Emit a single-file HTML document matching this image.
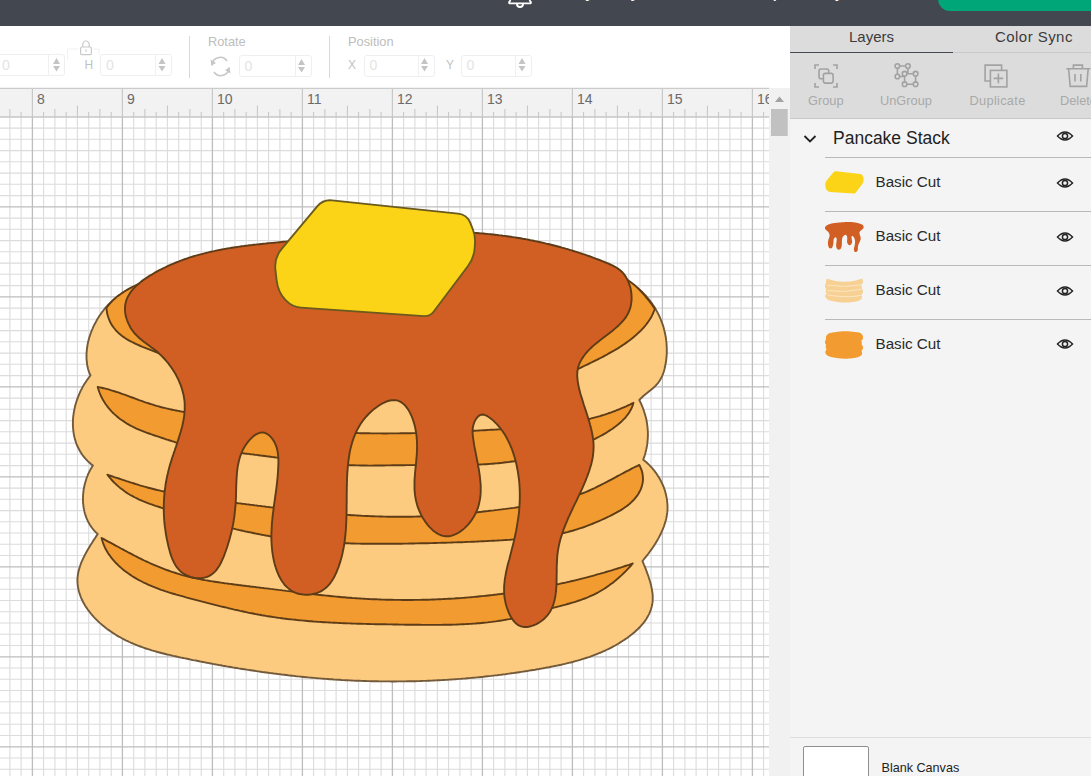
<!DOCTYPE html>
<html><head><meta charset="utf-8">
<style>
html,body{margin:0;padding:0;}
body{width:1091px;height:776px;overflow:hidden;position:relative;background:#fff;font-family:"Liberation Sans",sans-serif;}
.abs{position:absolute;}
#topbar{left:0;top:0;width:1091px;height:26px;background:#424750;overflow:hidden;}
#topbar .t{position:absolute;top:-20px;font-size:20px;color:#fff;white-space:nowrap;line-height:20px;}
#green{position:absolute;left:938px;top:-20px;width:200px;height:31px;border-radius:12px;background:#00a677;}
#toolbar{left:0;top:26px;width:790px;height:62px;background:#fff;}
.lbl{position:absolute;font-size:12.8px;color:#bdbdbd;line-height:14px;white-space:nowrap;}
.inp{position:absolute;height:20px;border:1px solid #efefef;border-radius:3px;background:transparent;}
.inp .z{position:absolute;left:5px;top:1.5px;font-size:14px;color:#e4e4e4;}
.inp .sp{position:absolute;top:0;right:0;width:15px;height:20px;border-left:1px solid #f0f0f0;}
.sep{position:absolute;top:36px;width:1px;height:42px;background:#d9d9d9;}
#panel{left:790px;top:26px;width:301px;height:750px;background:#f4f4f4;}
#tabs{left:0;top:0;width:301px;height:27px;background:#dcdcdc;}
.tab{position:absolute;font-size:15px;color:#3b3b3b;line-height:17px;white-space:nowrap;}
#ptool{left:0;top:27px;width:301px;height:65px;background:#dcdcdc;border-bottom:1.5px solid #c8c8c8;}
.plbl{position:absolute;font-size:12.8px;color:#a9a9a9;line-height:14px;white-space:nowrap;}
.bc{position:absolute;left:85.5px;font-size:15.2px;color:#2a2a2a;line-height:17px;white-space:nowrap;}
.rowsep{position:absolute;left:35px;width:266px;height:1px;background:#b9b9b9;}
.eye{position:absolute;left:266px;width:17px;height:12px;}
</style></head><body>

<div id="topbar" class="abs">
  <svg class="abs" style="left:0;top:0" width="1091" height="26">
    <path d="M511 -8 Q511 1 509.2 2 Q508.6 3.4 510.5 3.4 H529.5 Q531.4 3.4 530.8 2 Q529 1 529 -8" fill="none" stroke="#fff" stroke-width="1.9"/>
    <path d="M517 4 A3 3 0 0 0 523 4" fill="none" stroke="#fff" stroke-width="1.9"/>
  </svg>
  <div class="t" style="left:568.5px;">My Projects</div>
  <div class="t" style="left:731.5px;">Sample Projects,</div>
  <div id="green"></div>
</div>

<div id="toolbar" class="abs">
  <!-- W input (clipped) -->
  <div class="inp" style="left:-10px;top:28px;width:73px;"><span class="z" style="left:11px">0</span><div class="sp"></div></div>
  <svg class="abs" style="left:0;top:0" width="790" height="62">
    <g fill="#c4c4c4">
      <path d="M53 38 L60 38 L56.5 32 Z"/><path d="M53 40 L60 40 L56.5 45.5 Z"/>
      <path d="M158.5 38 L165.5 38 L162 32 Z"/><path d="M158.5 40 L165.5 40 L162 45.5 Z"/>
      <path d="M298 39 L305 39 L301.5 33 Z"/><path d="M298 41 L305 41 L301.5 46.5 Z"/>
      <path d="M421 38 L428 38 L424.5 32 Z"/><path d="M421 40 L428 40 L424.5 45.5 Z"/>
      <path d="M518.5 38 L525.5 38 L522 32 Z"/><path d="M518.5 40 L525.5 40 L522 45.5 Z"/>
    </g>
    <!-- lock -->
    <g fill="none" stroke="#c9c9c9" stroke-width="1.2">
      <rect x="80.6" y="21" width="10.8" height="7.6" rx="1.2"/>
      <path d="M82.8 21 V17.5 Q86 12 89.2 17.5 V21"/>
    </g>
    <rect x="85.4" y="23.5" width="1.2" height="2.4" fill="#c9c9c9"/>
    <path d="M67.5 34 V23 H79 M93 23 H99 V29" fill="none" stroke="#f1f1f1" stroke-width="1"/>
    <!-- rotate icon -->
    <g fill="none" stroke="#c6c6c6" stroke-width="1.6">
      <path d="M212 39.5 A8.2 8.2 0 0 1 227 35"/>
      <path d="M229 41.5 A8.2 8.2 0 0 1 214 46"/>
    </g>
    <g fill="#c6c6c6">
      <path d="M210.5 33.5 L211.5 39.5 L216 37 Z"/>
      <path d="M230.5 47.5 L229.5 41.5 L225 44 Z"/>
    </g>
  </svg>
  <div class="lbl" style="left:84.5px;top:32px;font-size:12px;color:#c2c2c2">H</div>
  <div class="inp" style="left:100px;top:28px;width:70px;"><span class="z">0</span><div class="sp"></div></div>
  <div class="sep" style="left:188.5px;top:10px;"></div>
  <div class="lbl" style="left:208px;top:9px;">Rotate</div>
  <div class="inp" style="left:238.5px;top:29px;width:71px;"><span class="z">0</span><div class="sp"></div></div>
  <div class="sep" style="left:328.5px;top:10px;"></div>
  <div class="lbl" style="left:348px;top:9px;">Position</div>
  <div class="lbl" style="left:348px;top:31.5px;font-size:12px;color:#c2c2c2">X</div>
  <div class="inp" style="left:363.5px;top:28.5px;width:69px;"><span class="z">0</span><div class="sp"></div></div>
  <div class="lbl" style="left:446px;top:31.5px;font-size:12px;color:#c2c2c2">Y</div>
  <div class="inp" style="left:460.5px;top:28.5px;width:69px;"><span class="z">0</span><div class="sp"></div></div>
</div>

<!-- canvas: ruler + grid -->
<svg class="abs" style="left:0;top:0" width="790" height="776">
  <rect x="0" y="88" width="769" height="29" fill="#f2f2f2"/>
  <rect x="0" y="117" width="769" height="659" fill="#fff"/>
  <path d="M9.9 117 V776 M21.1 117 V776 M43.6 117 V776 M54.9 117 V776 M66.2 117 V776 M77.4 117 V776 M88.7 117 V776 M99.9 117 V776 M111.2 117 V776 M133.7 117 V776 M144.9 117 V776 M156.2 117 V776 M167.4 117 V776 M178.7 117 V776 M189.9 117 V776 M201.2 117 V776 M223.7 117 V776 M234.9 117 V776 M246.2 117 V776 M257.4 117 V776 M268.6 117 V776 M279.9 117 V776 M291.1 117 V776 M313.6 117 V776 M324.9 117 V776 M336.1 117 V776 M347.4 117 V776 M358.6 117 V776 M369.9 117 V776 M381.1 117 V776 M403.6 117 V776 M414.9 117 V776 M426.1 117 V776 M437.4 117 V776 M448.6 117 V776 M459.9 117 V776 M471.1 117 V776 M493.6 117 V776 M504.9 117 V776 M516.1 117 V776 M527.4 117 V776 M538.6 117 V776 M549.9 117 V776 M561.1 117 V776 M583.6 117 V776 M594.9 117 V776 M606.1 117 V776 M617.4 117 V776 M628.6 117 V776 M639.9 117 V776 M651.1 117 V776 M673.6 117 V776 M684.9 117 V776 M696.1 117 V776 M707.4 117 V776 M718.6 117 V776 M729.9 117 V776 M741.1 117 V776 M763.6 117 V776 M0 128.1 H769 M0 139.3 H769 M0 150.6 H769 M0 161.8 H769 M0 173.1 H769 M0 184.3 H769 M0 195.6 H769 M0 218.1 H769 M0 229.3 H769 M0 240.6 H769 M0 251.8 H769 M0 263.1 H769 M0 274.3 H769 M0 285.6 H769 M0 308.1 H769 M0 319.3 H769 M0 330.6 H769 M0 341.8 H769 M0 353.1 H769 M0 364.3 H769 M0 375.6 H769 M0 398.1 H769 M0 409.3 H769 M0 420.6 H769 M0 431.8 H769 M0 443.1 H769 M0 454.3 H769 M0 465.6 H769 M0 488.1 H769 M0 499.3 H769 M0 510.6 H769 M0 521.8 H769 M0 533 H769 M0 544.3 H769 M0 555.5 H769 M0 578 H769 M0 589.3 H769 M0 600.5 H769 M0 611.8 H769 M0 623 H769 M0 634.3 H769 M0 645.5 H769 M0 668 H769 M0 679.3 H769 M0 690.5 H769 M0 701.8 H769 M0 713 H769 M0 724.3 H769 M0 735.5 H769 M0 758 H769 M0 769.3 H769" stroke="#dcdcdc" stroke-width="1.1" fill="none"/>
  <path d="M32.4 117 V776 M122.4 117 V776 M212.4 117 V776 M302.4 117 V776 M392.4 117 V776 M482.4 117 V776 M572.4 117 V776 M662.4 117 V776 M752.4 117 V776 M0 206.8 H769 M0 296.8 H769 M0 386.8 H769 M0 476.8 H769 M0 566.8 H769 M0 656.8 H769 M0 746.8 H769" stroke="#bdbdbd" stroke-width="1.3" fill="none"/>
  <path d="M9.9 109 V117 M21.1 112 V117 M43.6 112 V117 M54.9 109 V117 M66.2 112 V117 M77.4 105.5 V117 M88.7 112 V117 M99.9 109 V117 M111.2 112 V117 M133.7 112 V117 M144.9 109 V117 M156.2 112 V117 M167.4 105.5 V117 M178.7 112 V117 M189.9 109 V117 M201.2 112 V117 M223.7 112 V117 M234.9 109 V117 M246.2 112 V117 M257.4 105.5 V117 M268.6 112 V117 M279.9 109 V117 M291.1 112 V117 M313.6 112 V117 M324.9 109 V117 M336.1 112 V117 M347.4 105.5 V117 M358.6 112 V117 M369.9 109 V117 M381.1 112 V117 M403.6 112 V117 M414.9 109 V117 M426.1 112 V117 M437.4 105.5 V117 M448.6 112 V117 M459.9 109 V117 M471.1 112 V117 M493.6 112 V117 M504.9 109 V117 M516.1 112 V117 M527.4 105.5 V117 M538.6 112 V117 M549.9 109 V117 M561.1 112 V117 M583.6 112 V117 M594.9 109 V117 M606.1 112 V117 M617.4 105.5 V117 M628.6 112 V117 M639.9 109 V117 M651.1 112 V117 M673.6 112 V117 M684.9 109 V117 M696.1 112 V117 M707.4 105.5 V117 M718.6 112 V117 M729.9 109 V117 M741.1 112 V117 M763.6 112 V117" stroke="#c4c4c4" stroke-width="1" fill="none"/>
  <path d="M32.4 88 V117 M122.4 88 V117 M212.4 88 V117 M302.4 88 V117 M392.4 88 V117 M482.4 88 V117 M572.4 88 V117 M662.4 88 V117 M752.4 88 V117" stroke="#c8c8c8" stroke-width="1.2" fill="none"/>
  <path d="M0 88.3 H769" stroke="#cbcbcb" stroke-width="1.3"/>
  <path d="M0 117 H769" stroke="#c6c6c6" stroke-width="1.6"/>
  <g font-family="Liberation Sans" font-size="14" fill="#6a6a6a"><text x="37" y="103.5">8</text><text x="127" y="103.5">9</text><text x="217" y="103.5">10</text><text x="307" y="103.5">11</text><text x="397" y="103.5">12</text><text x="487" y="103.5">13</text><text x="577" y="103.5">14</text><text x="667" y="103.5">15</text><text x="757" y="103.5">16</text></g>
  <!-- scrollbar -->
  <rect x="769" y="88" width="21" height="688" fill="#f1f1f1"/>
  <path d="M775 102 L784 102 L779.5 96.5 Z" fill="#a3a3a3"/>
  <rect x="771" y="109" width="16.7" height="27" fill="#c1c1c1"/>

  <!-- pancake -->
  <g stroke="#5e3c17" stroke-width="1.9" stroke-linejoin="round">
    <path d="M90.5 375.5L89.7 373.7L89 371.9L88.4 370.1L87.9 368.2L87.5 366.3L87.1 364.4L86.9 362.4L86.7 360.5L86.5 358.5L86.5 356.5L86.5 354.5L86.6 352.5L86.8 350.5L87 348.5L87.3 346.5L87.6 344.5L88 342.5L88.5 340.5L89 338.5L89.6 336.5L90.3 334.5L91 332.5L91.7 330.6L92.6 328.6L93.4 326.7L94.3 324.8L95.3 323L96.3 321.1L97.3 319.3L98.4 317.6L99.5 315.8L100.7 314.1L101.8 312.4L103.1 310.8L104.3 309.2L105.6 307.7L107 306.2L108.3 304.7L109.7 303.3L111.1 301.9L112.6 300.6L114 299.4L115.5 298.1L117 296.9L118.6 295.8L120.2 294.7L121.8 293.6L123.4 292.6L125 291.6L126.7 290.7L128.4 289.7L130.1 288.9L131.8 288L133.5 287.2L135.3 286.4L137.1 285.6L138.9 284.9L140.7 284.2L142.5 283.5L144.4 282.9L146.2 282.3L148.1 281.7L150 281.1L151.9 280.5L153.8 280L155.8 279.5L157.7 279L159.7 278.5L161.6 278.1L163.6 277.7L165.6 277.2L167.6 276.8L169.6 276.4L171.6 276.1L173.6 275.7L175.6 275.4L177.6 275L179.7 274.7L181.7 274.4L183.7 274L185.8 273.7L187.8 273.4L189.9 273.1L191.9 272.8L193.9 272.5L196 272.2L198 271.9L200.1 271.7L202.1 271.4L204.2 271.1L206.2 270.8L208.2 270.5L210.3 270.2L212.3 269.9L214.3 269.6L216.4 269.3L218.4 269L220.4 268.7L222.5 268.4L224.5 268.1L226.5 267.8L228.5 267.5L230.5 267.2L232.6 266.9L234.6 266.6L236.6 266.3L238.6 266L240.6 265.7L242.6 265.4L244.6 265.1L246.6 264.9L248.6 264.6L250.7 264.3L252.7 264L254.7 263.7L256.7 263.4L258.7 263.1L260.7 262.8L262.7 262.6L264.6 262.3L266.6 262L268.6 261.7L270.6 261.4L272.6 261.2L274.6 260.9L276.6 260.6L278.6 260.4L280.6 260.1L282.6 259.8L284.5 259.6L286.5 259.3L288.5 259.1L290.5 258.8L292.5 258.6L294.5 258.3L296.4 258.1L298.4 257.9L300.4 257.6L302.4 257.4L304.4 257.2L306.3 257L308.3 256.7L310.3 256.5L312.3 256.3L314.2 256.1L316.2 255.9L318.2 255.7L320.2 255.5L322.1 255.3L324.1 255.1L326.1 254.9L328 254.8L330 254.6L332 254.4L333.9 254.3L335.9 254.1L337.9 253.9L339.9 253.8L341.8 253.6L343.8 253.5L345.8 253.4L347.7 253.3L349.7 253.1L351.7 253L353.6 252.9L355.6 252.8L357.6 252.7L359.5 252.6L361.5 252.5L363.5 252.4L365.4 252.4L367.4 252.3L369.4 252.2L371.3 252.2L373.3 252.1L375.3 252.1L377.2 252.1L379.2 252L381.2 252L383.1 252L385.1 252L387.1 252L389 252L391 252L393 252L394.9 252.1L396.9 252.1L398.9 252.1L400.9 252.2L402.8 252.2L404.8 252.3L406.8 252.4L408.7 252.4L410.7 252.5L412.7 252.6L414.7 252.7L416.6 252.8L418.6 252.8L420.6 252.9L422.6 253.1L424.5 253.2L426.5 253.3L428.5 253.4L430.5 253.5L432.4 253.6L434.4 253.8L436.4 253.9L438.4 254.1L440.4 254.2L442.3 254.3L444.3 254.5L446.3 254.7L448.3 254.8L450.3 255L452.3 255.1L454.2 255.3L456.2 255.5L458.2 255.7L460.2 255.8L462.2 256L464.2 256.2L466.2 256.4L468.1 256.6L470.1 256.8L472.1 257L474.1 257.2L476.1 257.4L478.1 257.6L480.1 257.8L482.1 258L484.1 258.2L486.1 258.4L488.1 258.6L490.1 258.8L492.1 259L494.1 259.2L496.1 259.4L498.1 259.6L500.1 259.9L502.1 260.1L504.1 260.3L506.1 260.5L508.1 260.7L510.1 260.9L512.2 261.2L514.2 261.4L516.2 261.6L518.2 261.8L520.2 262L522.2 262.3L524.2 262.5L526.3 262.7L528.3 262.9L530.3 263.1L532.3 263.3L534.4 263.6L536.4 263.8L538.4 264L540.4 264.2L542.5 264.4L544.5 264.6L546.5 264.8L548.6 265L550.6 265.2L552.6 265.4L554.7 265.6L556.7 265.8L558.7 266L560.8 266.2L562.8 266.4L564.9 266.6L566.9 266.8L569 267L571 267.2L573 267.4L575.1 267.6L577.1 267.8L579.1 268L581.2 268.3L583.2 268.5L585.2 268.8L587.2 269.1L589.2 269.4L591.2 269.7L593.2 270L595.2 270.4L597.1 270.7L599.1 271.1L601 271.6L603 272L604.9 272.5L606.8 273L608.7 273.6L610.6 274.1L612.4 274.7L614.3 275.4L616.1 276.1L618 276.8L619.8 277.5L621.6 278.3L623.3 279.2L625.1 280.1L626.8 281L628.5 282L630.2 283L631.9 284L633.5 285.1L635.1 286.3L636.7 287.5L638.3 288.7L639.8 290L641.3 291.3L642.8 292.7L644.2 294.1L645.5 295.5L646.9 297L648.2 298.5L649.5 300.1L650.7 301.7L651.9 303.3L653 305L654.1 306.6L655.2 308.4L656.2 310.1L657.2 311.9L658.1 313.7L659 315.5L659.9 317.3L660.6 319.2L661.4 321.1L662.1 323L662.8 324.9L663.4 326.8L663.9 328.8L664.4 330.7L664.9 332.7L665.3 334.7L665.7 336.7L666 338.7L666.2 340.7L666.5 342.7L666.6 344.7L666.7 346.7L666.8 348.7L666.8 350.8L666.8 352.8L666.7 354.8L666.5 356.8L666.3 358.8L666.1 360.8L665.8 362.8L665.4 364.8L665 366.7L664.6 368.7L664.1 370.6L663.5 372.5L662.8 374.3L662.1 376.1L661.2 377.9L660.3 379.6L659.3 381.2L658.2 382.8L657 384.2L655.7 385.6L654.3 387L652.9 388.3L651.4 389.5L649.8 390.8L648.3 392L646.7 393.3L645.2 394.5L643.6 395.8L642.1 397.2L640.7 398.5L639.3 400L640.2 401.9L641.1 403.7L641.9 405.6L642.7 407.5L643.4 409.5L644.1 411.4L644.7 413.4L645.3 415.4L645.8 417.3L646.3 419.3L646.7 421.3L647 423.4L647.3 425.4L647.5 427.4L647.7 429.4L647.8 431.5L647.9 433.5L647.9 435.6L647.8 437.6L647.7 439.6L647.5 441.7L647.3 443.7L647 445.7L646.6 447.7L646.2 449.8L645.7 451.8L645.2 453.8L644.6 455.8L643.9 457.7L643.2 459.7L644.8 461L646.4 462.3L647.9 463.7L649.4 465.2L650.8 466.7L652.2 468.2L653.6 469.8L654.8 471.4L656.1 473.1L657.2 474.8L658.3 476.5L659.4 478.2L660.4 480L661.3 481.8L662.2 483.7L663 485.5L663.8 487.4L664.5 489.3L665.1 491.2L665.6 493.2L666.1 495.1L666.5 497.1L666.9 499.1L667.1 501L667.3 503L667.5 505L667.5 507L667.5 509L667.4 510.9L667.2 512.9L666.9 514.9L666.6 516.8L666.2 518.8L665.7 520.7L665.1 522.6L664.5 524.6L663.9 526.5L663.1 528.4L662.4 530.2L661.5 532.1L660.7 534L659.7 535.8L658.8 537.6L657.8 539.4L656.7 541.2L655.7 543L654.6 544.7L653.4 546.5L652.3 548.2L651.1 549.9L649.9 551.5L648.7 553.2L647.5 554.8L646.2 556.4L645 557.9L643.7 559.5L642.5 561L643.2 562.6L643.8 564.3L644.5 566L645.3 567.8L646 569.7L646.7 571.6L647.4 573.6L648.2 575.6L648.8 577.6L649.5 579.7L650.1 581.7L650.7 583.8L651.2 585.9L651.6 588L652 590.2L652.3 592.2L652.6 594.3L652.7 596.4L652.7 598.4L652.7 600.4L652.5 602.4L652.2 604.3L651.8 606.2L651.3 608L650.8 609.8L650.1 611.6L649.4 613.4L648.5 615.1L647.6 616.7L646.6 618.4L645.6 620L644.5 621.6L643.3 623.1L642 624.6L640.7 626.1L639.4 627.5L638 629L636.5 630.3L635 631.7L633.5 633L631.9 634.3L630.3 635.5L628.7 636.8L627.1 638L625.4 639.1L623.7 640.2L622 641.3L620.3 642.4L618.6 643.5L616.9 644.5L615.2 645.5L613.4 646.4L611.7 647.4L609.9 648.3L608.1 649.2L606.3 650L604.5 650.9L602.7 651.7L600.9 652.5L599 653.2L597.2 654L595.3 654.7L593.5 655.4L591.6 656.1L589.7 656.8L587.9 657.4L586 658L584.1 658.6L582.2 659.2L580.3 659.8L578.3 660.4L576.4 660.9L574.5 661.4L572.6 662L570.6 662.5L568.7 662.9L566.7 663.4L564.8 663.9L562.8 664.3L560.9 664.8L558.9 665.2L556.9 665.6L554.9 666L553 666.4L551 666.8L549 667.2L547 667.5L545.1 667.9L543.1 668.3L541.1 668.6L539.1 669L537.1 669.3L535.1 669.7L533.2 670L531.2 670.3L529.2 670.6L527.2 671L525.2 671.3L523.2 671.6L521.2 671.9L519.3 672.2L517.3 672.5L515.3 672.8L513.3 673.1L511.3 673.3L509.3 673.6L507.3 673.9L505.3 674.2L503.3 674.4L501.3 674.7L499.3 674.9L497.4 675.2L495.4 675.4L493.4 675.6L491.4 675.9L489.4 676.1L487.4 676.3L485.4 676.5L483.4 676.8L481.4 677L479.4 677.2L477.4 677.4L475.4 677.6L473.4 677.7L471.4 677.9L469.4 678.1L467.4 678.3L465.4 678.5L463.4 678.6L461.4 678.8L459.4 678.9L457.4 679.1L455.4 679.2L453.4 679.4L451.4 679.5L449.4 679.6L447.4 679.8L445.4 679.9L443.4 680L441.4 680.1L439.5 680.2L437.5 680.3L435.5 680.4L433.5 680.5L431.5 680.6L429.5 680.7L427.5 680.8L425.5 680.9L423.5 680.9L421.5 681L419.5 681.1L417.5 681.1L415.5 681.2L413.5 681.2L411.5 681.3L409.5 681.3L407.5 681.3L405.5 681.4L403.5 681.4L401.5 681.4L399.5 681.4L397.5 681.4L395.5 681.5L393.5 681.5L391.5 681.5L389.5 681.4L387.5 681.4L385.5 681.4L383.5 681.4L381.5 681.4L379.5 681.4L377.5 681.3L375.5 681.3L373.5 681.2L371.5 681.2L369.5 681.1L367.5 681.1L365.5 681L363.5 681L361.6 680.9L359.6 680.8L357.6 680.7L355.6 680.7L353.6 680.6L351.6 680.5L349.6 680.4L347.6 680.3L345.6 680.2L343.6 680.1L341.6 680L339.6 679.8L337.7 679.7L335.7 679.6L333.7 679.5L331.7 679.3L329.7 679.2L327.7 679L325.7 678.9L323.7 678.7L321.8 678.6L319.8 678.4L317.8 678.3L315.8 678.1L313.8 677.9L311.8 677.7L309.9 677.6L307.9 677.4L305.9 677.2L303.9 677L301.9 676.8L300 676.6L298 676.4L296 676.2L294 675.9L292 675.7L290 675.5L288.1 675.3L286.1 675L284.1 674.8L282.1 674.6L280.1 674.3L278.2 674.1L276.2 673.8L274.2 673.6L272.2 673.3L270.3 673.1L268.3 672.8L266.3 672.5L264.3 672.2L262.3 672L260.4 671.7L258.4 671.4L256.4 671.1L254.4 670.8L252.5 670.5L250.5 670.2L248.5 669.9L246.5 669.6L244.5 669.3L242.6 669L240.6 668.7L238.6 668.4L236.6 668L234.6 667.7L232.7 667.4L230.7 667L228.7 666.7L226.7 666.4L224.7 666L222.8 665.7L220.8 665.3L218.8 665L216.8 664.6L214.8 664.2L212.9 663.9L210.9 663.5L208.9 663.1L206.9 662.8L204.9 662.4L203 662L201 661.6L199 661.2L197 660.8L195 660.4L193 660.1L191.1 659.7L189.1 659.2L187.1 658.8L185.1 658.4L183.1 658L181.1 657.6L179.2 657.2L177.2 656.7L175.2 656.3L173.2 655.9L171.2 655.4L169.3 654.9L167.3 654.5L165.3 654L163.4 653.5L161.4 653L159.5 652.5L157.5 652L155.6 651.4L153.7 650.8L151.7 650.3L149.8 649.7L147.9 649.1L146 648.5L144.1 647.8L142.2 647.2L140.4 646.5L138.5 645.8L136.7 645.1L134.8 644.3L133 643.5L131.2 642.8L129.4 642L127.6 641.1L125.8 640.3L124 639.4L122.3 638.5L120.6 637.5L118.8 636.6L117.1 635.6L115.4 634.5L113.8 633.5L112.1 632.4L110.5 631.3L108.8 630.1L107.2 629L105.6 627.8L104.1 626.5L102.5 625.2L101 623.9L99.5 622.6L98 621.2L96.6 619.8L95.1 618.3L93.7 616.8L92.4 615.3L91.1 613.8L89.8 612.2L88.6 610.6L87.4 609L86.3 607.4L85.2 605.7L84.2 604L83.2 602.3L82.4 600.5L81.5 598.8L80.8 597L80.1 595.2L79.5 593.3L78.9 591.5L78.5 589.6L78.1 587.7L77.8 585.8L77.6 583.9L77.5 582L77.4 580.1L77.5 578.1L77.7 576.1L78 574.2L78.3 572.2L78.8 570.2L79.4 568.2L80 566.2L80.7 564.2L81.5 562.2L82.4 560.2L83.3 558.2L84.2 556.3L85.2 554.4L86.2 552.4L87.3 550.6L88.3 548.7L89.4 546.9L90.5 545.1L91.6 543.4L92.7 541.7L93.7 540.1L94.8 538.5L95.8 536.9L96.8 535.4L97.7 534L96.2 532.6L94.7 531.1L93.4 529.6L92.1 528L91 526.4L89.9 524.7L88.9 523L87.9 521.2L87.1 519.4L86.3 517.6L85.6 515.7L85 513.8L84.5 511.9L84.1 509.9L83.7 508L83.4 506L83.2 504L83 502L83 499.9L83 497.9L83 495.9L83.2 493.9L83.4 491.8L83.6 489.8L84 487.8L84.4 485.8L84.9 483.8L85.4 481.9L86 479.9L86.6 478L87.4 476.1L88.1 474.2L89 472.4L89.9 470.6L90.8 468.9L91.8 467.2L92.9 465.5L91.2 464.2L89.6 462.8L88 461.4L86.6 459.9L85.2 458.4L83.9 456.8L82.7 455.3L81.5 453.6L80.5 452L79.5 450.3L78.6 448.5L77.7 446.8L76.9 445L76.2 443.1L75.6 441.3L75 439.4L74.5 437.5L74.1 435.6L73.7 433.7L73.5 431.8L73.2 429.8L73.1 427.8L72.9 425.9L72.9 423.9L72.9 421.9L73 419.9L73.1 417.9L73.3 415.9L73.6 413.9L73.9 411.9L74.3 409.9L74.7 407.9L75.1 405.9L75.7 404L76.3 402L76.9 400.1L77.6 398.2L78.3 396.3L79.1 394.4L79.9 392.5L80.8 390.7L81.7 388.9L82.6 387.1L83.6 385.3L84.7 383.6L85.8 381.9L86.9 380.2L88.1 378.6L89.3 377L90.5 375.5Z" fill="#fccb7f" stroke="#735a3a" stroke-width="1.9"/>
    <path d="M165 272L163.2 272.9L161.4 273.8L159.6 274.7L157.8 275.5L155.9 276.4L154.1 277.2L152.2 278L150.3 278.9L148.4 279.7L146.5 280.5L144.6 281.3L142.7 282.2L140.8 283L139 283.9L137.1 284.7L135.2 285.6L133.4 286.5L131.5 287.4L129.7 288.4L127.9 289.4L126.2 290.4L124.4 291.5L122.7 292.6L121 293.7L119.4 294.9L117.7 296.1L116.2 297.4L114.6 298.7L113.1 300.1L111.7 301.6L110.3 303.1L108.9 304.6L107.6 306.3L106.4 308L106.7 310.3L107 312.6L107.5 314.7L108.1 316.8L108.8 318.8L109.6 320.7L110.4 322.5L111.4 324.2L112.4 325.9L113.6 327.5L114.8 329L116 330.5L117.4 331.9L118.8 333.2L120.3 334.5L121.8 335.7L123.4 336.9L125 338L126.7 339.1L128.4 340.1L130.2 341.1L132 342L133.8 342.9L135.7 343.8L137.5 344.7L139.4 345.5L141.3 346.3L143.2 347.1L145.2 347.8L147.1 348.6L149 349.3L151 350.1L152.9 350.8L154.8 351.6L156.7 352.3L158.6 353.1L160.4 354L162.3 354.8L164.1 355.7L165.9 356.7L167.6 357.6L169.3 358.7L171 359.8L172.6 361L174.2 362.2L175.7 363.5L177.2 364.9L178.6 366.4L180 368L181.9 365.6L183.6 363.3L185.3 361L187 358.7L188.5 356.5L190 354.2L191.4 352L192.7 349.9L194 347.7L195.2 345.6L196.3 343.4L197.3 341.4L198.2 339.3L199.1 337.2L199.9 335.2L200.6 333.2L201.3 331.3L201.8 329.3L202.3 327.4L202.8 325.5L203.1 323.6L203.4 321.8L203.6 319.9L203.7 318.1L203.7 316.4L203.7 314.6L203.6 312.9L203.4 311.2L203.1 309.5L202.8 307.8L202.4 306.2L201.9 304.6L201.3 303L200.7 301.4L199.9 299.9L199.1 298.4L198.3 296.9L197.3 295.4L196.3 293.9L195.2 292.5L194 291.1L192.8 289.8L191.5 288.4L190.1 287.1L188.6 285.8L187.1 284.5L185.4 283.2L183.7 282L181.9 280.8L180.1 279.6L178.2 278.5L176.2 277.3L174.1 276.2L171.9 275.1L169.7 274.1L167.4 273L165 272Z" fill="#f29b30"/>
    <path d="M598 274L600.3 273.6L602.6 273.4L604.8 273.3L606.9 273.3L609.1 273.5L611.2 273.7L613.2 274.1L615.2 274.5L617.2 275.1L619.1 275.8L621 276.5L622.8 277.3L624.6 278.3L626.4 279.2L628.1 280.3L629.8 281.5L631.5 282.7L633.1 283.9L634.7 285.2L636.2 286.6L637.8 288L639.2 289.5L640.7 291L642.1 292.5L643.5 294.1L644.9 295.6L646.2 297.3L647.5 298.9L648.8 300.5L650.1 302.1L651.3 303.8L652.5 305.4L653.7 307.1L654.8 308.7L654.2 310.6L653.4 312.5L652.6 314.4L651.7 316.2L650.7 317.9L649.7 319.6L648.6 321.3L647.4 322.9L646.2 324.5L644.9 326.1L643.6 327.6L642.2 329.1L640.8 330.6L639.3 332L637.8 333.4L636.3 334.8L634.8 336.1L633.2 337.4L631.6 338.7L630 340L628.3 341.2L626.7 342.4L625 343.6L623.3 344.7L621.6 345.9L619.9 347L618.2 348.1L616.5 349.2L614.7 350.2L613 351.2L611.2 352.2L609.4 353.2L607.6 354.2L605.9 355.2L604.1 356.1L602.3 357.1L600.5 358L598.7 358.9L596.9 359.8L595.1 360.7L593.2 361.6L591.4 362.5L589.6 363.4L587.8 364.3L585.9 365.2L584.1 366L582.3 366.9L580.5 367.8L578.6 368.7L576.8 369.6L575 370.5L573.4 368.1L571.8 365.6L570.3 363.2L568.8 360.9L567.5 358.5L566.2 356.2L565 353.9L563.8 351.7L562.7 349.5L561.7 347.3L560.8 345.1L559.9 343L559.1 340.8L558.4 338.8L557.7 336.7L557.1 334.7L556.6 332.7L556.1 330.7L555.8 328.8L555.4 326.8L555.2 325L555 323.1L554.9 321.3L554.9 319.5L554.9 317.7L555 315.9L555.2 314.2L555.5 312.5L555.8 310.9L556.2 309.2L556.6 307.6L557.2 306L557.8 304.5L558.4 303L559.2 301.5L560 300L560.9 298.6L561.8 297.2L562.9 295.8L563.9 294.4L565.1 293.1L566.3 291.8L567.6 290.5L569 289.3L570.5 288.1L572 286.9L573.5 285.7L575.2 284.6L576.9 283.5L578.7 282.4L580.6 281.4L582.5 280.3L584.5 279.4L586.6 278.4L588.7 277.5L590.9 276.5L593.2 275.7L595.6 274.8L598 274Z" fill="#f29b30"/>
    <path d="M97.7 387L99.7 387.4L101.6 387.8L103.6 388.2L105.5 388.7L107.5 389.2L109.4 389.7L111.3 390.3L113.2 390.8L115.2 391.5L117.1 392.1L119 392.7L120.8 393.4L122.7 394.1L124.6 394.7L126.5 395.4L128.4 396.1L130.3 396.8L132.1 397.5L134 398.2L135.9 398.9L137.8 399.6L139.7 400.3L141.6 400.9L143.4 401.6L145.3 402.3L147.2 402.9L149.1 403.5L151 404.1L152.9 404.7L154.8 405.3L156.7 405.9L158.7 406.4L160.6 407L162.5 407.5L164.5 407.9L166.4 408.4L168.4 408.8L170.3 409.3L172.3 409.7L174.2 410.1L176.2 410.5L178.1 410.9L180.1 411.3L182.1 411.6L184 412L186 412.4L188 412.8L189.9 413.1L191.9 413.5L193.9 413.9L195.8 414.2L197.8 414.6L199.8 415L201.7 415.3L203.7 415.7L205.7 416.1L207.6 416.4L209.6 416.8L211.6 417.1L213.6 417.5L215.5 417.8L217.5 418.2L219.5 418.5L221.4 418.8L223.4 419.2L225.4 419.5L227.4 419.9L229.3 420.2L231.3 420.5L233.3 420.8L235.3 421.2L237.3 421.5L239.2 421.8L241.2 422.1L243.2 422.4L245.2 422.7L247.1 423L249.1 423.3L251.1 423.6L253.1 423.9L255.1 424.2L257.1 424.4L259 424.7L261 425L263 425.3L265 425.5L267 425.8L269 426.1L271 426.3L273 426.6L275 426.8L276.9 427L278.9 427.3L280.9 427.5L282.9 427.7L284.9 428L286.9 428.2L288.9 428.4L290.9 428.6L292.9 428.8L294.9 429L296.9 429.2L298.9 429.4L300.9 429.6L302.9 429.8L304.9 429.9L306.9 430.1L308.9 430.3L310.9 430.5L312.9 430.6L314.9 430.8L316.9 430.9L318.9 431.1L320.9 431.2L322.9 431.4L324.9 431.5L326.9 431.6L328.9 431.8L330.9 431.9L332.9 432L334.9 432.1L336.9 432.2L338.9 432.3L340.9 432.4L342.9 432.5L344.9 432.6L346.9 432.7L348.9 432.8L350.9 432.8L352.9 432.9L354.9 433L356.9 433L358.9 433.1L360.9 433.2L362.9 433.2L364.9 433.2L366.9 433.3L368.9 433.3L370.9 433.4L372.9 433.4L374.9 433.4L376.9 433.4L378.9 433.4L380.9 433.4L382.9 433.5L384.9 433.5L386.9 433.5L388.9 433.4L390.9 433.4L392.9 433.4L394.9 433.4L396.9 433.4L398.9 433.4L400.9 433.3L402.9 433.3L404.9 433.3L406.9 433.2L408.9 433.2L410.9 433.2L412.9 433.1L414.9 433.1L416.9 433L418.9 433L420.8 432.9L422.8 432.9L424.8 432.8L426.8 432.7L428.8 432.7L430.8 432.6L432.8 432.5L434.8 432.5L436.8 432.4L438.8 432.3L440.8 432.2L442.8 432.2L444.8 432.1L446.8 432L448.8 431.9L450.8 431.8L452.8 431.7L454.8 431.6L456.9 431.5L458.9 431.5L460.9 431.4L462.9 431.3L464.9 431.2L466.9 431.1L468.9 431L470.9 430.9L472.9 430.8L474.9 430.7L476.9 430.6L478.9 430.5L480.9 430.4L482.9 430.3L484.9 430.2L486.9 430L488.9 429.9L490.9 429.8L492.9 429.7L495 429.6L497 429.5L499 429.4L501 429.3L503 429.2L505 429.1L507 429L509 428.9L511 428.7L513.1 428.6L515.1 428.5L517.1 428.4L519.1 428.3L521.1 428.1L523.1 428L525.1 427.9L527.1 427.7L529.1 427.6L531.1 427.4L533.1 427.3L535.1 427.1L537.1 426.9L539.1 426.8L541.1 426.6L543.1 426.4L545.1 426.2L547.1 426L549.1 425.8L551.1 425.5L553.1 425.3L555.1 425.1L557.1 424.8L559 424.5L561 424.3L563 424L565 423.7L566.9 423.4L568.9 423.1L570.9 422.7L572.8 422.4L574.8 422L576.8 421.7L578.7 421.3L580.7 420.9L582.6 420.5L584.5 420L586.5 419.6L588.4 419.1L590.3 418.7L592.3 418.2L594.2 417.7L596.1 417.2L598 416.6L599.9 416.1L601.8 415.5L603.8 414.9L605.6 414.3L607.5 413.7L609.4 413L611.3 412.4L613.2 411.7L615.1 411L616.9 410.2L618.8 409.5L620.6 408.7L622.5 407.9L624.3 407.1L626.2 406.3L628 405.4L629.9 404.6L631.7 403.7L633.5 402.8L632.9 404.8L632.2 406.7L631.4 408.5L630.5 410.3L629.5 412L628.4 413.6L627.2 415.2L626 416.8L624.7 418.3L623.3 419.7L621.9 421.1L620.4 422.5L618.9 423.8L617.4 425.1L615.8 426.3L614.1 427.5L612.5 428.7L610.8 429.8L609.1 430.9L607.4 432L605.7 433.1L603.9 434.1L602.2 435.1L600.4 436L598.6 437L596.8 437.9L595.1 438.8L593.2 439.6L591.4 440.5L589.6 441.3L587.8 442.1L585.9 442.8L584.1 443.6L582.2 444.3L580.4 445.1L578.5 445.8L576.6 446.4L574.7 447.1L572.8 447.7L570.9 448.4L569 449L567.1 449.6L565.2 450.2L563.3 450.7L561.4 451.3L559.4 451.8L557.5 452.4L555.6 452.9L553.6 453.4L551.7 453.9L549.7 454.4L547.8 454.9L545.8 455.3L543.9 455.8L541.9 456.2L540 456.7L538 457.1L536 457.5L534.1 457.9L532.1 458.3L530.1 458.7L528.2 459L526.2 459.4L524.2 459.7L522.2 460L520.2 460.4L518.3 460.7L516.3 461L514.3 461.3L512.3 461.5L510.3 461.8L508.3 462.1L506.3 462.3L504.3 462.5L502.3 462.8L500.3 463L498.3 463.2L496.3 463.4L494.3 463.5L492.3 463.7L490.3 463.9L488.3 464L486.3 464.2L484.3 464.3L482.3 464.4L480.3 464.5L478.3 464.6L476.3 464.7L474.3 464.8L472.3 464.9L470.3 464.9L468.3 465L466.3 465L464.3 465.1L462.3 465.1L460.3 465.1L458.4 465.1L456.4 465.2L454.4 465.2L452.4 465.2L450.4 465.2L448.4 465.2L446.4 465.2L444.4 465.2L442.4 465.2L440.4 465.1L438.4 465.1L436.4 465.1L434.4 465.1L432.4 465.1L430.3 465.1L428.3 465.1L426.3 465.1L424.3 465L422.3 465L420.3 465L418.3 465L416.3 465L414.3 465.1L412.3 465.1L410.3 465.1L408.3 465.1L406.3 465.1L404.3 465.2L402.3 465.2L400.3 465.2L398.3 465.2L396.3 465.3L394.3 465.3L392.2 465.3L390.2 465.4L388.2 465.4L386.2 465.4L384.2 465.5L382.2 465.5L380.2 465.5L378.2 465.5L376.2 465.5L374.2 465.5L372.2 465.6L370.2 465.6L368.2 465.6L366.2 465.5L364.2 465.5L362.2 465.5L360.2 465.5L358.1 465.4L356.1 465.4L354.1 465.3L352.1 465.3L350.1 465.2L348.1 465.1L346.1 465L344.2 464.9L342.2 464.8L340.2 464.7L338.2 464.6L336.2 464.4L334.2 464.3L332.2 464.1L330.2 464L328.2 463.8L326.2 463.6L324.2 463.4L322.2 463.3L320.2 463.1L318.3 462.9L316.3 462.6L314.3 462.4L312.3 462.2L310.3 462L308.3 461.7L306.3 461.5L304.3 461.3L302.3 461L300.4 460.8L298.4 460.5L296.4 460.3L294.4 460L292.4 459.8L290.4 459.5L288.4 459.2L286.5 459L284.5 458.7L282.5 458.4L280.5 458.2L278.5 457.9L276.5 457.6L274.5 457.3L272.5 457.1L270.5 456.8L268.6 456.5L266.6 456.3L264.6 456L262.6 455.7L260.6 455.5L258.6 455.2L256.6 454.9L254.6 454.7L252.6 454.4L250.6 454.2L248.6 453.9L246.6 453.7L244.6 453.5L242.6 453.2L240.6 453L238.6 452.8L236.6 452.6L234.6 452.3L232.6 452.1L230.6 451.9L228.6 451.7L226.6 451.5L224.6 451.2L222.6 451L220.6 450.8L218.7 450.5L216.7 450.3L214.7 450.1L212.7 449.8L210.7 449.5L208.7 449.3L206.7 449L204.8 448.7L202.8 448.4L200.8 448.1L198.8 447.7L196.9 447.4L194.9 447L193 446.6L191 446.2L189.1 445.8L187.1 445.4L185.2 444.9L183.3 444.4L181.3 443.9L179.4 443.4L177.5 442.9L175.6 442.3L173.7 441.7L171.8 441.1L169.9 440.5L168 439.9L166.1 439.3L164.2 438.6L162.3 438L160.4 437.3L158.5 436.7L156.6 436.1L154.7 435.5L152.8 434.8L150.9 434.2L149 433.5L147.1 432.8L145.2 432.2L143.3 431.4L141.4 430.7L139.6 429.9L137.7 429.1L135.9 428.3L134.1 427.4L132.3 426.5L130.5 425.6L128.8 424.6L127 423.6L125.3 422.5L123.7 421.4L122 420.3L120.4 419.2L118.8 418L117.3 416.7L115.8 415.4L114.3 414.1L112.9 412.8L111.5 411.4L110.2 409.9L108.9 408.4L107.7 406.9L106.5 405.3L105.4 403.7L104.3 402L103.2 400.3L102.3 398.6L101.3 396.8L100.5 394.9L99.7 393L99 391.1L98.3 389.1L97.7 387Z" fill="#f29b30"/>
    <path d="M107.4 474.7L109.3 475.3L111.2 476L113.1 476.6L115 477.3L116.9 477.9L118.8 478.5L120.7 479.2L122.6 479.8L124.5 480.4L126.4 481.1L128.3 481.7L130.2 482.3L132.2 482.9L134.1 483.5L136 484.1L137.9 484.7L139.8 485.3L141.7 485.8L143.6 486.4L145.6 486.9L147.5 487.5L149.4 488L151.4 488.5L153.3 489L155.2 489.5L157.2 490L159.1 490.4L161.1 490.9L163 491.3L165 491.7L166.9 492.2L168.9 492.6L170.8 493L172.8 493.4L174.7 493.8L176.7 494.1L178.7 494.5L180.6 494.9L182.6 495.2L184.6 495.6L186.5 495.9L188.5 496.2L190.5 496.6L192.5 496.9L194.4 497.2L196.4 497.5L198.4 497.8L200.4 498.1L202.3 498.4L204.3 498.7L206.3 499L208.3 499.3L210.3 499.5L212.3 499.8L214.2 500.1L216.2 500.3L218.2 500.6L220.2 500.9L222.2 501.1L224.2 501.4L226.2 501.7L228.2 501.9L230.2 502.2L232.2 502.4L234.1 502.7L236.1 502.9L238.1 503.2L240.1 503.4L242.1 503.7L244.1 503.9L246.1 504.2L248.1 504.4L250.1 504.7L252.1 504.9L254.1 505.2L256 505.4L258 505.7L260 505.9L262 506.2L264 506.4L266 506.7L268 506.9L270 507.2L272 507.4L274 507.6L276 507.9L278 508.1L280 508.4L281.9 508.6L283.9 508.8L285.9 509.1L287.9 509.3L289.9 509.5L291.9 509.7L293.9 510L295.9 510.2L297.9 510.4L299.9 510.6L301.9 510.8L303.9 511L305.9 511.2L307.9 511.5L309.9 511.7L311.8 511.9L313.8 512.1L315.8 512.2L317.8 512.4L319.8 512.6L321.8 512.8L323.8 513L325.8 513.2L327.8 513.4L329.8 513.5L331.8 513.7L333.8 513.9L335.8 514L337.8 514.2L339.8 514.3L341.8 514.5L343.8 514.6L345.8 514.8L347.8 514.9L349.7 515L351.7 515.2L353.7 515.3L355.7 515.4L357.7 515.5L359.7 515.6L361.7 515.8L363.7 515.9L365.7 516L367.7 516L369.7 516.1L371.7 516.2L373.7 516.3L375.7 516.4L377.7 516.4L379.7 516.5L381.7 516.5L383.7 516.6L385.7 516.6L387.7 516.7L389.7 516.7L391.7 516.7L393.7 516.8L395.7 516.8L397.7 516.8L399.7 516.8L401.7 516.8L403.7 516.8L405.7 516.8L407.7 516.7L409.7 516.7L411.7 516.7L413.7 516.6L415.7 516.6L417.7 516.5L419.7 516.5L421.7 516.4L423.7 516.3L425.7 516.3L427.7 516.2L429.7 516.1L431.7 516L433.7 515.9L435.7 515.7L437.7 515.6L439.7 515.5L441.7 515.4L443.7 515.2L445.7 515.1L447.7 515L449.7 514.8L451.7 514.6L453.7 514.5L455.7 514.3L457.7 514.1L459.7 514L461.7 513.8L463.7 513.6L465.7 513.4L467.6 513.2L469.6 513L471.6 512.8L473.6 512.6L475.6 512.4L477.6 512.2L479.6 512L481.6 511.8L483.6 511.5L485.6 511.3L487.6 511.1L489.6 510.8L491.6 510.6L493.6 510.4L495.6 510.1L497.6 509.9L499.6 509.6L501.6 509.4L503.6 509.1L505.6 508.9L507.6 508.6L509.6 508.4L511.6 508.1L513.6 507.9L515.6 507.6L517.6 507.3L519.6 507.1L521.6 506.8L523.6 506.5L525.6 506.3L527.6 506L529.6 505.7L531.5 505.4L533.5 505.1L535.5 504.8L537.5 504.5L539.5 504.2L541.5 503.9L543.4 503.6L545.4 503.2L547.4 502.9L549.3 502.5L551.3 502.1L553.3 501.7L555.2 501.3L557.2 500.9L559.1 500.4L561 500L563 499.5L564.9 499L566.8 498.5L568.7 497.9L570.6 497.4L572.5 496.8L574.4 496.2L576.3 495.6L578.2 494.9L580 494.2L581.9 493.5L583.8 492.8L585.6 492.1L587.4 491.3L589.3 490.5L591.1 489.7L592.9 488.8L594.7 488L596.5 487.1L598.3 486.2L600.1 485.3L601.9 484.4L603.7 483.5L605.5 482.6L607.3 481.7L609.1 480.7L610.8 479.8L612.6 478.8L614.4 477.9L616.2 476.9L617.9 475.9L619.7 475L621.5 474L623.3 473.1L625 472.1L626.8 471.2L628.6 470.3L630.4 469.3L632.1 468.4L633.9 467.5L635.7 466.6L637.5 465.8L639.3 464.9L640.3 467L641.2 469.1L641.9 471.1L642.4 473.2L642.7 475.2L642.9 477.1L643 479.1L642.9 481L642.6 482.9L642.2 484.8L641.7 486.6L641.1 488.4L640.4 490.1L639.5 491.8L638.6 493.5L637.6 495.1L636.4 496.6L635.2 498.1L634 499.6L632.6 501L631.2 502.4L629.7 503.7L628.2 504.9L626.6 506.2L625 507.3L623.3 508.5L621.6 509.6L619.9 510.7L618.1 511.7L616.3 512.7L614.4 513.7L612.6 514.7L610.7 515.6L608.9 516.5L607 517.4L605.1 518.3L603.2 519.2L601.4 520L599.5 520.8L597.6 521.6L595.8 522.4L593.9 523.2L592 524L590.2 524.7L588.3 525.4L586.4 526.1L584.6 526.8L582.7 527.5L580.8 528.1L578.9 528.7L577 529.3L575.2 529.9L573.3 530.5L571.4 531L569.5 531.5L567.5 532.1L565.6 532.5L563.7 533L561.8 533.4L559.8 533.9L557.9 534.3L555.9 534.6L554 535L552 535.3L550 535.7L548.1 536L546.1 536.3L544.1 536.6L542.1 536.8L540.1 537.1L538.1 537.3L536.1 537.6L534.1 537.8L532.1 538L530.1 538.2L528.1 538.4L526.1 538.6L524.1 538.7L522.1 538.9L520.1 539.1L518.1 539.2L516 539.4L514 539.5L512 539.6L510 539.8L508 539.9L506 540L504 540.1L502 540.3L500 540.4L497.9 540.5L495.9 540.6L493.9 540.7L491.9 540.8L489.9 540.9L487.9 541L485.9 541.1L483.9 541.2L481.9 541.3L479.9 541.4L477.9 541.5L475.9 541.6L473.9 541.7L471.9 541.8L469.9 541.9L467.9 541.9L465.9 542L463.9 542.1L461.9 542.2L459.9 542.2L457.9 542.3L455.9 542.4L453.9 542.4L451.9 542.5L449.9 542.6L447.9 542.6L445.9 542.7L443.9 542.7L441.9 542.8L439.9 542.9L437.9 542.9L435.9 543L433.9 543L431.9 543.1L429.9 543.1L427.9 543.2L425.8 543.2L423.8 543.2L421.8 543.3L419.8 543.3L417.8 543.4L415.8 543.4L413.8 543.5L411.8 543.5L409.8 543.5L407.8 543.6L405.8 543.6L403.8 543.6L401.8 543.7L399.8 543.7L397.8 543.7L395.8 543.7L393.7 543.7L391.7 543.8L389.7 543.8L387.7 543.8L385.7 543.8L383.7 543.8L381.7 543.8L379.7 543.8L377.7 543.8L375.7 543.8L373.7 543.8L371.7 543.8L369.6 543.8L367.6 543.8L365.6 543.7L363.6 543.7L361.6 543.7L359.6 543.6L357.6 543.6L355.6 543.6L353.6 543.5L351.6 543.5L349.6 543.4L347.6 543.3L345.6 543.3L343.5 543.2L341.5 543.1L339.5 543L337.5 543L335.5 542.9L333.5 542.8L331.5 542.7L329.5 542.6L327.5 542.4L325.5 542.3L323.5 542.2L321.5 542.1L319.5 541.9L317.5 541.8L315.5 541.6L313.5 541.5L311.5 541.3L309.5 541.1L307.5 541L305.6 540.8L303.6 540.6L301.6 540.4L299.6 540.2L297.6 540L295.6 539.7L293.6 539.5L291.6 539.3L289.6 539L287.6 538.8L285.7 538.5L283.7 538.3L281.7 538L279.7 537.7L277.7 537.4L275.8 537.1L273.8 536.8L271.8 536.5L269.8 536.2L267.9 535.8L265.9 535.5L263.9 535.1L261.9 534.8L260 534.4L258 534L256 533.6L254.1 533.2L252.1 532.8L250.2 532.4L248.2 532L246.2 531.6L244.3 531.2L242.3 530.7L240.4 530.3L238.4 529.8L236.4 529.4L234.5 528.9L232.5 528.4L230.6 528L228.6 527.5L226.7 527L224.7 526.5L222.8 526L220.9 525.5L218.9 525L217 524.5L215 524L213.1 523.4L211.1 522.9L209.2 522.4L207.3 521.8L205.3 521.3L203.4 520.7L201.5 520.2L199.5 519.6L197.6 519L195.7 518.5L193.7 517.9L191.8 517.3L189.9 516.7L188 516.1L186 515.6L184.1 515L182.2 514.4L180.3 513.8L178.4 513.2L176.4 512.6L174.5 512L172.6 511.4L170.7 510.7L168.8 510.1L166.9 509.5L164.9 508.9L163 508.3L161.1 507.7L159.2 507L157.3 506.4L155.4 505.8L153.5 505.1L151.6 504.4L149.7 503.8L147.9 503.1L146 502.4L144.2 501.6L142.3 500.9L140.5 500.1L138.7 499.3L136.9 498.4L135.1 497.5L133.4 496.6L131.6 495.7L129.9 494.7L128.2 493.7L126.5 492.6L124.9 491.5L123.3 490.3L121.7 489.1L120.1 487.9L118.6 486.6L117.1 485.3L115.6 483.9L114.1 482.5L112.7 481L111.3 479.5L110 477.9L108.7 476.3L107.4 474.7Z" fill="#f29b30"/>
    <path d="M101.6 538L103.4 538.9L105.1 539.9L106.9 540.8L108.7 541.8L110.4 542.7L112.2 543.7L114 544.6L115.7 545.6L117.5 546.5L119.3 547.5L121 548.5L122.8 549.4L124.6 550.4L126.4 551.3L128.1 552.3L129.9 553.2L131.7 554.1L133.5 555.1L135.3 556L137.1 556.9L138.8 557.8L140.6 558.7L142.4 559.6L144.3 560.5L146.1 561.3L147.9 562.2L149.7 563L151.5 563.8L153.4 564.6L155.2 565.4L157 566.2L158.9 566.9L160.7 567.7L162.6 568.4L164.4 569.1L166.3 569.8L168.2 570.5L170 571.2L171.9 571.8L173.8 572.4L175.7 573L177.6 573.6L179.5 574.2L181.4 574.8L183.3 575.3L185.3 575.8L187.2 576.3L189.1 576.8L191.1 577.3L193 577.7L194.9 578.1L196.9 578.5L198.9 578.9L200.8 579.3L202.8 579.7L204.7 580.1L206.7 580.4L208.7 580.8L210.7 581.1L212.6 581.4L214.6 581.7L216.6 582L218.6 582.3L220.6 582.6L222.6 582.9L224.6 583.2L226.6 583.4L228.6 583.7L230.6 583.9L232.6 584.2L234.6 584.5L236.6 584.7L238.6 585L240.5 585.2L242.5 585.5L244.5 585.7L246.5 586L248.5 586.2L250.5 586.5L252.5 586.7L254.5 586.9L256.5 587.2L258.5 587.4L260.5 587.7L262.5 587.9L264.5 588.2L266.5 588.4L268.5 588.6L270.5 588.9L272.5 589.1L274.5 589.4L276.5 589.6L278.5 589.9L280.5 590.1L282.5 590.4L284.5 590.6L286.4 590.9L288.4 591.1L290.4 591.4L292.4 591.6L294.4 591.9L296.4 592.1L298.4 592.4L300.4 592.6L302.4 592.9L304.3 593.1L306.3 593.3L308.3 593.6L310.3 593.8L312.3 594.1L314.3 594.3L316.3 594.5L318.2 594.8L320.2 595L322.2 595.2L324.2 595.4L326.2 595.6L328.2 595.8L330.2 596L332.2 596.2L334.2 596.4L336.1 596.6L338.1 596.8L340.1 597L342.1 597.2L344.1 597.3L346.1 597.5L348.1 597.7L350.1 597.8L352.1 598L354.1 598.1L356.1 598.2L358.1 598.4L360.1 598.5L362.1 598.6L364.1 598.7L366.1 598.9L368.1 599L370.1 599.1L372.1 599.2L374.1 599.2L376.1 599.3L378.1 599.4L380.1 599.5L382.1 599.6L384.1 599.6L386.1 599.7L388.1 599.7L390.1 599.8L392.1 599.8L394.1 599.9L396.1 599.9L398.1 599.9L400.1 599.9L402.2 600L404.2 600L406.2 600L408.2 600L410.2 600L412.2 600L414.2 599.9L416.2 599.9L418.2 599.9L420.2 599.9L422.2 599.8L424.2 599.8L426.2 599.7L428.2 599.7L430.2 599.6L432.2 599.5L434.2 599.5L436.2 599.4L438.3 599.3L440.3 599.2L442.3 599.1L444.3 599L446.3 598.9L448.3 598.8L450.3 598.7L452.3 598.6L454.3 598.5L456.3 598.3L458.3 598.2L460.3 598.1L462.3 597.9L464.3 597.8L466.3 597.6L468.3 597.4L470.3 597.3L472.3 597.1L474.3 596.9L476.3 596.7L478.3 596.5L480.3 596.3L482.3 596.1L484.3 595.9L486.3 595.7L488.3 595.5L490.3 595.3L492.3 595.1L494.2 594.8L496.2 594.6L498.2 594.3L500.2 594.1L502.2 593.8L504.2 593.6L506.2 593.3L508.2 593L510.2 592.7L512.1 592.4L514.1 592.2L516.1 591.9L518.1 591.6L520.1 591.2L522.1 590.9L524 590.6L526 590.3L528 590L530 589.6L531.9 589.3L533.9 588.9L535.9 588.6L537.9 588.2L539.8 587.8L541.8 587.5L543.8 587.1L545.7 586.7L547.7 586.3L549.7 585.9L551.6 585.5L553.6 585.1L555.6 584.7L557.5 584.3L559.5 583.9L561.4 583.4L563.4 583L565.4 582.6L567.3 582.1L569.3 581.7L571.2 581.2L573.2 580.8L575.1 580.3L577.1 579.8L579 579.3L580.9 578.8L582.9 578.4L584.8 577.9L586.8 577.4L588.7 576.8L590.6 576.3L592.6 575.8L594.5 575.3L596.4 574.7L598.4 574.2L600.3 573.7L602.2 573.1L604.1 572.6L606.1 572L608 571.4L609.9 570.8L611.8 570.3L613.7 569.7L615.7 569.1L617.6 568.5L619.5 567.9L621.4 567.3L623.3 566.7L625.2 566L627.1 565.4L629 564.8L630.9 564.1L632.8 563.5L631.5 565L630.1 566.5L628.8 567.9L627.4 569.4L626 570.8L624.6 572.3L623.1 573.7L621.7 575.1L620.2 576.4L618.7 577.8L617.2 579.1L615.6 580.4L614.1 581.7L612.5 582.9L610.9 584.1L609.3 585.3L607.6 586.5L606 587.6L604.3 588.7L602.6 589.8L600.9 590.8L599.2 591.8L597.5 592.8L595.7 593.7L593.9 594.6L592.1 595.4L590.3 596.2L588.5 597L586.6 597.8L584.8 598.5L582.9 599.2L581 599.9L579.1 600.5L577.2 601.1L575.3 601.8L573.4 602.3L571.5 602.9L569.5 603.5L567.6 604L565.7 604.6L563.7 605.1L561.8 605.6L559.8 606.2L557.9 606.7L555.9 607.2L554 607.7L552.1 608.2L550.1 608.8L548.2 609.3L546.2 609.8L544.3 610.3L542.4 610.9L540.4 611.4L538.5 611.9L536.6 612.5L534.6 613L532.7 613.5L530.8 614L528.9 614.5L526.9 615L525 615.5L523.1 616L521.1 616.5L519.2 616.9L517.2 617.4L515.3 617.8L513.3 618.3L511.4 618.7L509.4 619.1L507.5 619.4L505.5 619.8L503.5 620.1L501.5 620.5L499.6 620.8L497.6 621.1L495.6 621.4L493.6 621.6L491.6 621.9L489.6 622.1L487.6 622.4L485.6 622.6L483.6 622.8L481.6 623L479.6 623.2L477.6 623.3L475.6 623.5L473.6 623.6L471.6 623.8L469.6 623.9L467.6 624L465.6 624.1L463.6 624.2L461.6 624.3L459.6 624.4L457.6 624.5L455.6 624.6L453.6 624.6L451.6 624.7L449.6 624.7L447.6 624.8L445.6 624.8L443.6 624.8L441.6 624.9L439.6 624.9L437.6 624.9L435.6 624.9L433.6 624.9L431.6 624.9L429.6 624.9L427.6 624.9L425.7 624.9L423.7 624.9L421.7 624.9L419.7 624.8L417.7 624.8L415.7 624.8L413.7 624.8L411.7 624.7L409.7 624.7L407.7 624.7L405.7 624.7L403.7 624.6L401.7 624.6L399.7 624.6L397.6 624.5L395.6 624.5L393.6 624.5L391.6 624.4L389.6 624.4L387.6 624.4L385.6 624.3L383.6 624.3L381.6 624.3L379.6 624.2L377.6 624.2L375.6 624.2L373.6 624.1L371.6 624.1L369.6 624L367.6 624L365.6 623.9L363.5 623.9L361.5 623.8L359.5 623.8L357.5 623.7L355.5 623.6L353.5 623.6L351.5 623.5L349.5 623.4L347.5 623.4L345.5 623.3L343.5 623.2L341.5 623.1L339.5 623L337.5 622.9L335.5 622.8L333.5 622.7L331.4 622.6L329.4 622.5L327.4 622.4L325.4 622.3L323.4 622.2L321.4 622L319.4 621.9L317.4 621.8L315.4 621.6L313.4 621.5L311.4 621.3L309.4 621.2L307.4 621L305.4 620.8L303.5 620.6L301.5 620.4L299.5 620.3L297.5 620.1L295.5 619.8L293.5 619.6L291.5 619.4L289.5 619.2L287.5 619L285.5 618.7L283.6 618.5L281.6 618.2L279.6 617.9L277.6 617.7L275.6 617.4L273.7 617.1L271.7 616.8L269.7 616.5L267.7 616.2L265.8 615.9L263.8 615.5L261.8 615.2L259.8 614.8L257.9 614.5L255.9 614.1L253.9 613.7L252 613.3L250 613L248.1 612.6L246.1 612.1L244.1 611.7L242.2 611.3L240.2 610.9L238.3 610.4L236.3 610L234.4 609.6L232.4 609.1L230.5 608.6L228.5 608.2L226.6 607.7L224.6 607.2L222.7 606.8L220.7 606.3L218.8 605.8L216.9 605.3L214.9 604.8L213 604.3L211 603.8L209.1 603.3L207.1 602.8L205.2 602.3L203.3 601.8L201.3 601.3L199.4 600.8L197.5 600.3L195.5 599.8L193.6 599.3L191.6 598.8L189.7 598.3L187.8 597.8L185.9 597.3L183.9 596.7L182 596.2L180.1 595.7L178.2 595.1L176.3 594.6L174.3 594L172.4 593.5L170.5 592.9L168.6 592.3L166.7 591.7L164.9 591.1L163 590.4L161.1 589.8L159.2 589.1L157.4 588.4L155.5 587.7L153.6 586.9L151.8 586.2L149.9 585.4L148.1 584.6L146.2 583.7L144.4 582.9L142.6 582L140.8 581L139 580.1L137.2 579.1L135.5 578.1L133.8 577.1L132 576L130.4 574.9L128.7 573.8L127.1 572.6L125.5 571.4L123.9 570.2L122.3 568.9L120.8 567.6L119.3 566.3L117.9 564.9L116.5 563.5L115.1 562.1L113.8 560.6L112.5 559.1L111.3 557.6L110.1 556L108.9 554.4L107.8 552.8L106.8 551.1L105.8 549.3L104.9 547.5L104.1 545.7L103.4 543.9L102.7 542L102.1 540L101.6 538Z" fill="#f29b30"/>
    <path d="M125.1 311.9L125 309.8L125 307.8L125.1 305.9L125.4 304L125.8 302.2L126.3 300.4L127 298.7L127.7 297L128.6 295.4L129.6 293.8L130.6 292.2L131.8 290.7L133 289.2L134.3 287.8L135.7 286.4L137.1 285L138.7 283.7L140.2 282.4L141.8 281.1L143.5 279.9L145.2 278.7L146.9 277.6L148.7 276.4L150.4 275.3L152.2 274.3L154 273.2L155.8 272.2L157.6 271.2L159.4 270.2L161.2 269.3L163.1 268.4L164.9 267.5L166.7 266.6L168.6 265.7L170.4 264.9L172.2 264.1L174.1 263.3L176 262.5L177.8 261.8L179.7 261.1L181.6 260.4L183.4 259.7L185.3 259L187.2 258.4L189.1 257.7L191 257.1L192.9 256.5L194.8 255.9L196.7 255.4L198.6 254.8L200.5 254.3L202.5 253.8L204.4 253.3L206.3 252.8L208.2 252.4L210.2 251.9L212.1 251.5L214.1 251.1L216 250.6L217.9 250.3L219.9 249.9L221.8 249.5L223.8 249.1L225.8 248.8L227.7 248.4L229.7 248.1L231.6 247.8L233.6 247.5L235.6 247.2L237.6 246.9L239.5 246.6L241.5 246.3L243.5 246.1L245.5 245.8L247.5 245.6L249.4 245.3L251.4 245.1L253.4 244.8L255.4 244.6L257.4 244.4L259.4 244.2L261.4 244L263.4 243.8L265.4 243.6L267.4 243.3L269.4 243.1L271.4 242.9L273.4 242.8L275.4 242.6L277.4 242.4L279.4 242.2L281.4 242L283.4 241.8L285.4 241.6L287.4 241.4L289.4 241.2L291.4 241L293.4 240.8L295.4 240.6L297.4 240.4L299.4 240.2L301.4 240L303.4 239.8L305.4 239.7L307.4 239.5L309.4 239.3L311.4 239.1L313.4 238.9L315.4 238.7L317.4 238.5L319.4 238.3L321.4 238.1L323.4 237.9L325.4 237.7L327.4 237.5L329.4 237.4L331.4 237.2L333.4 237L335.4 236.8L337.4 236.6L339.4 236.4L341.4 236.3L343.4 236.1L345.4 235.9L347.4 235.8L349.4 235.6L351.4 235.4L353.4 235.3L355.4 235.1L357.4 234.9L359.4 234.8L361.4 234.6L363.4 234.5L365.4 234.3L367.4 234.2L369.4 234L371.4 233.9L373.4 233.7L375.4 233.6L377.4 233.5L379.4 233.4L381.4 233.2L383.4 233.1L385.4 233L387.4 232.9L389.4 232.8L391.4 232.7L393.4 232.6L395.4 232.5L397.4 232.4L399.4 232.3L401.4 232.2L403.4 232.1L405.4 232L407.4 232L409.4 231.9L411.4 231.8L413.4 231.8L415.4 231.7L417.3 231.7L419.3 231.6L421.3 231.6L423.3 231.6L425.3 231.5L427.3 231.5L429.3 231.5L431.3 231.5L433.3 231.5L435.3 231.5L437.3 231.5L439.3 231.5L441.3 231.5L443.3 231.6L445.3 231.6L447.3 231.6L449.3 231.7L451.2 231.7L453.2 231.8L455.2 231.9L457.2 231.9L459.2 232L461.2 232.1L463.2 232.2L465.2 232.3L467.2 232.4L469.2 232.5L471.1 232.6L473.1 232.8L475.1 232.9L477.1 233L479.1 233.2L481.1 233.4L483.1 233.5L485 233.7L487 233.9L489 234.1L491 234.3L493 234.5L495 234.7L497 234.9L498.9 235.2L500.9 235.4L502.9 235.7L504.9 235.9L506.9 236.2L508.8 236.5L510.8 236.8L512.8 237.1L514.8 237.4L516.8 237.7L518.7 238L520.7 238.3L522.7 238.7L524.7 239L526.6 239.4L528.6 239.8L530.6 240.2L532.6 240.5L534.5 241L536.5 241.4L538.5 241.8L540.4 242.2L542.4 242.6L544.4 243.1L546.3 243.6L548.3 244L550.2 244.5L552.2 245L554.1 245.5L556.1 246L558 246.5L560 247L561.9 247.6L563.9 248.1L565.8 248.7L567.7 249.2L569.7 249.8L571.6 250.4L573.5 251L575.4 251.6L577.3 252.2L579.3 252.8L581.2 253.4L583.1 254.1L585 254.7L586.9 255.4L588.8 256L590.6 256.7L592.5 257.4L594.4 258.1L596.3 258.8L598.2 259.5L600 260.2L601.9 261L603.7 261.7L605.6 262.5L607.4 263.2L609.3 264L611.1 264.8L612.9 265.7L614.6 266.6L616.3 267.5L617.9 268.6L619.5 269.7L621 271L622.4 272.3L623.7 273.8L624.9 275.4L626 277.1L627 278.9L627.9 280.7L628.7 282.6L629.4 284.6L630.1 286.6L630.6 288.6L631 290.7L631.3 292.8L631.5 294.9L631.6 297L631.6 299.1L631.5 301.2L631.2 303.2L630.9 305.2L630.5 307.1L629.9 308.9L629.3 310.7L628.5 312.5L627.6 314.2L626.7 315.8L625.7 317.4L624.6 318.9L623.4 320.4L622.1 321.8L620.8 323.2L619.4 324.6L618 326L616.5 327.3L615 328.6L613.5 329.9L611.9 331.2L610.3 332.4L608.6 333.7L607 335L605.3 336.2L603.6 337.5L602 338.8L600.3 340.1L598.6 341.4L597 342.7L595.4 344L593.8 345.4L592.2 346.8L590.7 348.2L589.3 349.7L587.8 351.2L586.5 352.7L585.2 354.2L584 355.8L582.9 357.4L581.8 359L580.9 360.6L580 362.3L579.2 364.1L578.6 365.8L578.1 367.6L577.7 369.5L577.4 371.3L577.3 373.2L577.2 375.2L577.3 377.1L577.5 379.1L577.7 381.1L578 383.1L578.4 385.1L578.8 387.1L579.3 389.2L579.8 391.2L580.3 393.2L580.9 395.2L581.5 397.1L582.1 399.1L582.7 401.1L583.3 403.1L583.9 405L584.6 407L585.2 408.9L585.9 410.9L586.5 412.8L587.1 414.8L587.7 416.7L588.3 418.6L588.9 420.6L589.5 422.5L590 424.4L590.6 426.4L591 428.3L591.5 430.2L591.9 432.1L592.3 434.1L592.6 436L592.9 437.9L593.2 439.9L593.4 441.8L593.5 443.8L593.6 445.7L593.6 447.7L593.5 449.6L593.4 451.6L593.2 453.5L593 455.5L592.7 457.5L592.3 459.5L591.9 461.4L591.4 463.4L590.9 465.4L590.3 467.3L589.7 469.3L589.1 471.2L588.4 473.2L587.7 475.1L587 477L586.2 478.9L585.5 480.8L584.7 482.7L583.9 484.6L583.1 486.5L582.3 488.3L581.4 490.2L580.6 492L579.7 493.8L578.9 495.6L578 497.4L577.1 499.3L576.3 501.1L575.4 502.9L574.5 504.7L573.7 506.4L572.8 508.2L572 510L571.1 511.8L570.3 513.6L569.5 515.4L568.6 517.2L567.8 519L567.1 520.8L566.3 522.6L565.6 524.4L564.8 526.3L564.1 528.1L563.4 529.9L562.8 531.8L562.2 533.6L561.6 535.5L561 537.4L560.4 539.3L559.9 541.2L559.5 543.1L559 545L558.6 547L558.3 548.9L557.9 550.9L557.7 552.9L557.4 554.9L557.2 557L557.1 559L557 561.1L556.9 563.2L556.8 565.2L556.7 567.3L556.7 569.4L556.7 571.5L556.7 573.6L556.6 575.7L556.6 577.8L556.6 579.9L556.5 582L556.5 584.1L556.4 586.1L556.2 588.2L556.1 590.2L555.9 592.2L555.6 594.2L555.4 596.1L555 598L554.6 599.9L554.1 601.8L553.6 603.6L553 605.4L552.3 607.2L551.5 608.9L550.7 610.5L549.7 612.2L548.6 613.7L547.5 615.3L546.2 616.7L544.8 618.2L543.3 619.5L541.7 620.8L540 622L538.2 623.1L536.4 624.1L534.5 625L532.5 625.7L530.6 626.3L528.6 626.7L526.7 627L524.8 627L522.9 626.8L521.1 626.4L519.3 625.7L517.7 624.8L516.1 623.6L514.7 622.2L513.4 620.6L512.1 618.8L511 617L509.9 615L509 613L508.1 611L507.4 609L506.7 607L506.1 605L505.6 603L505.2 601.1L504.8 599.1L504.5 597.1L504.3 595.2L504.2 593.2L504.1 591.3L504.1 589.3L504.1 587.4L504.2 585.4L504.4 583.5L504.6 581.5L504.8 579.5L505.1 577.6L505.5 575.6L505.8 573.6L506.2 571.6L506.7 569.6L507.1 567.6L507.6 565.6L508.1 563.6L508.6 561.7L509.2 559.7L509.7 557.7L510.2 555.7L510.7 553.7L511.2 551.7L511.7 549.8L512.2 547.8L512.7 545.9L513.2 543.9L513.7 542L514.1 540.1L514.6 538.1L515 536.2L515.4 534.3L515.8 532.4L516.2 530.5L516.5 528.6L516.9 526.6L517.2 524.7L517.5 522.8L517.8 520.9L518.1 519L518.4 517.1L518.6 515.2L518.9 513.2L519.1 511.3L519.2 509.4L519.4 507.5L519.5 505.5L519.6 503.6L519.7 501.6L519.8 499.7L519.8 497.7L519.8 495.7L519.8 493.7L519.8 491.7L519.7 489.7L519.6 487.7L519.5 485.7L519.4 483.6L519.2 481.6L519 479.5L518.7 477.5L518.4 475.4L518.1 473.3L517.8 471.3L517.4 469.2L517 467.2L516.6 465.1L516.1 463.1L515.6 461.1L515.1 459L514.5 457L513.9 455.1L513.3 453.1L512.6 451.1L511.9 449.2L511.1 447.3L510.3 445.4L509.5 443.5L508.6 441.7L507.7 439.9L506.8 438.1L505.8 436.3L504.8 434.6L503.7 432.9L502.6 431.3L501.4 429.7L500.2 428.1L499 426.6L497.7 425.1L496.4 423.7L495 422.3L493.6 420.9L492.1 419.6L490.6 418.4L489 417.2L487.4 416.2L485.8 415.3L484.2 414.8L482.7 414.5L481.1 414.7L479.6 415.3L478.2 416.4L476.9 417.8L475.7 419.5L474.7 421.4L473.9 423.4L473.3 425.4L472.9 427.4L472.7 429.4L472.6 431.4L472.6 433.3L472.8 435.3L473 437.3L473.3 439.4L473.6 441.4L473.9 443.4L474.2 445.4L474.6 447.4L475 449.5L475.4 451.5L475.8 453.5L476.2 455.6L476.6 457.6L477 459.7L477.4 461.7L477.8 463.7L478.1 465.8L478.5 467.8L478.9 469.8L479.2 471.9L479.5 473.9L479.8 475.9L480 478L480.2 480L480.4 482L480.6 484L480.7 486L480.7 488L480.7 489.9L480.7 491.9L480.6 493.9L480.4 495.8L480.2 497.8L479.9 499.7L479.5 501.6L479.1 503.5L478.6 505.4L478.1 507.3L477.4 509.2L476.7 511L475.8 512.9L474.9 514.7L473.9 516.5L472.8 518.3L471.6 520.1L470.3 521.8L469 523.5L467.6 525.1L466.1 526.6L464.6 528.1L463 529.5L461.3 530.8L459.7 531.9L458 533L456.2 533.9L454.5 534.7L452.7 535.4L450.9 535.9L449.2 536.2L447.4 536.3L445.6 536.3L443.9 536L442.2 535.6L440.4 535L438.8 534.3L437.1 533.4L435.5 532.3L433.9 531.2L432.4 529.9L430.9 528.4L429.4 526.9L428 525.3L426.7 523.6L425.4 521.9L424.2 520L423 518.2L421.9 516.3L420.9 514.3L420 512.3L419.1 510.4L418.3 508.4L417.6 506.4L417 504.4L416.5 502.5L416 500.5L415.6 498.6L415.3 496.6L415 494.7L414.8 492.7L414.6 490.8L414.5 488.9L414.5 486.9L414.5 485L414.5 483.1L414.5 481.2L414.6 479.2L414.7 477.3L414.9 475.4L415 473.4L415.2 471.5L415.4 469.6L415.6 467.6L415.8 465.7L416 463.7L416.2 461.7L416.3 459.8L416.5 457.8L416.7 455.8L416.8 453.8L416.9 451.8L417 449.8L417 447.7L417.1 445.7L417 443.6L417 441.6L416.8 439.5L416.7 437.4L416.5 435.3L416.2 433.1L415.8 431L415.4 428.8L415 426.7L414.4 424.5L413.8 422.4L413.1 420.3L412.4 418.2L411.6 416.2L410.7 414.3L409.8 412.4L408.8 410.6L407.7 408.9L406.6 407.4L405.4 405.9L404.2 404.6L402.8 403.4L401.5 402.4L400 401.6L398.5 400.9L396.9 400.4L395.3 400.2L393.5 400.1L391.8 400.2L390 400.5L388.1 401L386.3 401.7L384.4 402.5L382.5 403.4L380.6 404.5L378.8 405.6L377 406.9L375.2 408.2L373.4 409.6L371.8 411L370.2 412.5L368.6 414L367.2 415.5L365.8 417L364.5 418.6L363.2 420.2L362 421.9L360.9 423.5L359.8 425.2L358.8 427L357.8 428.7L356.9 430.5L356 432.2L355.2 434.1L354.5 435.9L353.8 437.7L353.1 439.6L352.5 441.5L351.9 443.4L351.4 445.3L350.9 447.2L350.4 449.1L350 451.1L349.6 453L349.3 455L349 457L348.7 459L348.4 461L348.2 463L348 465L347.8 467L347.6 469L347.5 471.1L347.3 473.1L347.2 475.1L347.1 477.1L347 479.2L347 481.2L346.9 483.2L346.9 485.2L346.8 487.3L346.8 489.3L346.8 491.3L346.7 493.3L346.7 495.3L346.7 497.3L346.7 499.4L346.7 501.4L346.7 503.4L346.6 505.4L346.6 507.4L346.6 509.4L346.6 511.4L346.5 513.4L346.5 515.4L346.4 517.4L346.4 519.4L346.3 521.3L346.2 523.3L346.1 525.3L346 527.3L345.9 529.3L345.7 531.3L345.5 533.2L345.4 535.2L345.1 537.2L344.9 539.1L344.7 541.1L344.4 543L344.1 545L343.8 546.9L343.4 548.9L343 550.8L342.6 552.8L342.2 554.7L341.7 556.7L341.2 558.6L340.6 560.5L340.1 562.4L339.4 564.3L338.8 566.3L338.1 568.2L337.3 570.1L336.6 572L335.7 573.8L334.9 575.7L333.9 577.5L332.9 579.2L331.8 580.9L330.7 582.6L329.5 584.1L328.2 585.6L326.8 587L325.3 588.3L323.7 589.5L322 590.6L320.3 591.6L318.4 592.5L316.4 593.2L314.3 593.7L312.2 594.2L310 594.5L307.8 594.7L305.7 594.7L303.5 594.6L301.5 594.3L299.5 594L297.6 593.5L295.7 592.8L294 592.1L292.3 591.2L290.7 590.2L289.2 589.1L287.8 587.9L286.4 586.6L285.1 585.3L283.9 583.8L282.8 582.3L281.7 580.7L280.7 579L279.7 577.2L278.8 575.5L278 573.6L277.2 571.7L276.5 569.8L275.8 567.8L275.2 565.9L274.6 563.8L274.1 561.8L273.7 559.8L273.3 557.7L272.9 555.7L272.6 553.6L272.3 551.6L272.1 549.6L271.9 547.5L271.7 545.5L271.6 543.5L271.5 541.5L271.4 539.5L271.4 537.5L271.4 535.5L271.4 533.5L271.5 531.5L271.6 529.5L271.7 527.5L271.8 525.6L271.9 523.6L272.1 521.6L272.3 519.6L272.5 517.7L272.7 515.7L272.9 513.7L273.2 511.8L273.4 509.8L273.7 507.8L273.9 505.9L274.2 503.9L274.5 501.9L274.8 500L275 498L275.3 496L275.6 494L275.9 492L276.1 490.1L276.4 488.1L276.6 486.1L276.9 484.1L277.1 482.1L277.3 480.1L277.5 478.1L277.7 476.1L277.8 474.1L278 472L278.1 470L278.2 468L278.3 465.9L278.4 463.9L278.4 461.8L278.4 459.8L278.3 457.7L278.1 455.7L277.9 453.6L277.6 451.6L277.2 449.6L276.7 447.6L276 445.7L275.2 443.8L274.3 441.9L273.2 440.1L271.9 438.3L270.5 436.7L269.1 435.3L267.5 434.2L265.9 433.3L264.2 432.7L262.4 432.4L260.7 432.6L259 433L257.2 433.8L255.5 434.7L253.8 435.9L252.2 437.3L250.7 438.8L249.2 440.4L247.8 442.1L246.6 443.7L245.4 445.5L244.3 447.2L243.3 449L242.4 450.8L241.6 452.6L240.9 454.5L240.2 456.4L239.6 458.3L239.1 460.2L238.6 462.2L238.2 464.2L237.8 466.1L237.5 468.1L237.3 470.1L237 472.2L236.9 474.2L236.7 476.2L236.6 478.3L236.5 480.3L236.4 482.3L236.3 484.4L236.2 486.4L236.2 488.5L236.1 490.5L236.1 492.5L236 494.6L236 496.6L235.9 498.6L235.8 500.5L235.7 502.5L235.6 504.5L235.4 506.4L235.2 508.4L235 510.3L234.8 512.2L234.6 514.1L234.4 516.1L234.1 518L233.8 519.9L233.5 521.8L233.2 523.7L232.8 525.6L232.4 527.5L232 529.4L231.6 531.3L231.1 533.3L230.6 535.2L230.1 537.1L229.6 539.1L229 541L228.4 543L227.8 545L227.2 547L226.5 549L225.8 551L225 553L224.3 555.1L223.5 557.1L222.6 559.1L221.7 561.1L220.8 563L219.8 564.9L218.7 566.7L217.5 568.4L216.3 570.1L215 571.6L213.6 572.9L212.1 574.1L210.6 575.2L208.9 576.1L207.2 576.8L205.4 577.4L203.5 577.8L201.6 578.1L199.7 578.2L197.7 578.2L195.7 578L193.8 577.7L191.9 577.3L189.9 576.7L188.1 576L186.3 575.2L184.5 574.2L182.9 573.2L181.3 572L179.8 570.7L178.4 569.2L177.2 567.7L176 566.1L175 564.4L174 562.6L173.1 560.7L172.3 558.8L171.5 556.9L170.8 554.9L170.2 552.9L169.6 550.8L169.1 548.8L168.5 546.7L168.1 544.7L167.6 542.6L167.2 540.6L166.7 538.5L166.4 536.5L166 534.5L165.7 532.5L165.4 530.4L165.1 528.4L164.8 526.4L164.6 524.4L164.4 522.4L164.2 520.4L164.1 518.4L164 516.5L163.9 514.5L163.8 512.5L163.8 510.5L163.8 508.6L163.8 506.6L163.8 504.6L163.9 502.7L163.9 500.7L164.1 498.8L164.2 496.8L164.4 494.8L164.5 492.9L164.8 491L165 489L165.3 487.1L165.5 485.1L165.8 483.2L166.2 481.3L166.5 479.3L166.9 477.4L167.3 475.5L167.8 473.5L168.2 471.6L168.7 469.7L169.2 467.8L169.7 465.8L170.3 463.9L170.9 462L171.5 460.1L172.1 458.1L172.7 456.2L173.4 454.3L174 452.4L174.7 450.5L175.3 448.5L176 446.6L176.6 444.7L177.3 442.8L177.9 440.8L178.5 438.9L179.1 437L179.7 435.1L180.3 433.1L180.9 431.2L181.4 429.3L181.9 427.4L182.4 425.4L182.8 423.5L183.2 421.6L183.6 419.6L183.9 417.7L184.2 415.8L184.4 413.8L184.5 411.9L184.7 410L184.7 408L184.7 406.1L184.7 404.1L184.6 402.2L184.4 400.2L184.1 398.3L183.8 396.3L183.4 394.4L182.9 392.4L182.4 390.5L181.8 388.5L181.2 386.6L180.5 384.7L179.7 382.8L178.9 380.9L178.1 379L177.1 377.2L176.2 375.3L175.2 373.5L174.1 371.7L173 370L171.8 368.2L170.6 366.5L169.4 364.9L168.2 363.2L166.8 361.6L165.5 360L164.1 358.5L162.7 357L161.3 355.6L159.8 354.2L158.4 352.8L156.9 351.5L155.3 350.3L153.8 349.1L152.2 347.9L150.6 346.7L149.1 345.6L147.5 344.4L146 343.3L144.4 342.2L142.9 341L141.4 339.8L139.9 338.5L138.5 337.3L137.1 335.9L135.7 334.5L134.4 333.1L133.2 331.5L132 329.9L130.8 328.2L129.8 326.3L128.8 324.4L127.9 322.4L127.1 320.3L126.4 318.2L125.8 316.1L125.4 313.9L125.1 311.9Z" fill="#d15e22"/>
    <path d="M317.2 206.4Q323 199.5 332 200.4L458 213.6Q467 214.5 470.3 222.9L472.9 229.5Q475.5 236 475 243L474.7 248Q474 258 468 266L433.6 311.7Q430 316.5 424 316.1L301 307.6Q292 307 285.9 300.4L285 299.5Q278 292 276.6 280.1L275.4 269.9Q274 258 281.7 248.8Z" fill="#fbd317" stroke="#6b5a1e"/>
  </g>
</svg>

<div id="panel" class="abs">
  <div id="tabs" class="abs">
    <div class="tab" style="left:59px;top:2px;">Layers</div>
    <div class="tab" style="left:205px;top:2px;letter-spacing:0.45px">Color Sync</div>
    <div class="abs" style="left:0;top:25.5px;width:163px;height:2px;background:#444950"></div>
    <div class="abs" style="left:163px;top:26px;width:138px;height:1px;background:#c9c9c9"></div>
  </div>
  <div id="ptool" class="abs">
    <svg class="abs" style="left:0;top:0" width="301" height="64">
      <g fill="none" stroke="#a2a2a2" stroke-width="1.6">
        <!-- group -->
        <path d="M25 16 V12 H29 M43 12 H47 V16 M47 30 V34 H43 M29 34 H25 V30"/>
        <rect x="29" y="16" width="9.7" height="9.7" rx="2"/>
        <rect x="33.4" y="20.4" width="9.7" height="9.7" rx="2" fill="#dcdcdc"/>
        <!-- ungroup -->
        <path d="M107.4 13 H117.9 V20.7 M107.4 13 V23.5 H114.6 M114.6 20.7 H125.6 V31.2 H114.6 Z"/>
        <g fill="#dcdcdc">
        <circle cx="107.4" cy="13" r="2.3"/><circle cx="117.9" cy="13" r="2.3"/><circle cx="107.4" cy="23.5" r="2.3"/>
        <circle cx="114.6" cy="20.7" r="2.3"/><circle cx="125.6" cy="20.7" r="2.3"/><circle cx="114.6" cy="31.2" r="2.3"/><circle cx="125.6" cy="31.2" r="2.3"/>
        </g>
        <!-- duplicate -->
        <path d="M200.4 28 H195.1 V12.1 H211.6 V17.4"/>
        <rect x="200.4" y="17.4" width="16.5" height="16.5" fill="#dcdcdc"/>
        <path d="M208.4 20.6 V30.2 M203.6 25.4 H213.2"/>
        <!-- trash -->
        <path d="M276.4 15.8 H300.4 M283.4 15.8 V12.1 H292.4 V15.8 M278.6 15.8 L280.2 33.4 H296.6 L298.2 15.8 M285 21.1 V28.6 M290.8 21.1 V28.6"/>
      </g>
    </svg>
    <div class="plbl" style="left:18px;top:40.5px;">Group</div>
    <div class="plbl" style="left:90px;top:40.5px;">UnGroup</div>
    <div class="plbl" style="left:179.5px;top:40.5px;letter-spacing:0.3px">Duplicate</div>
    <div class="plbl" style="left:270px;top:40.5px;">Delete</div>
  </div>

  <!-- layers list -->
  <svg class="abs" style="left:0;top:0" width="301" height="750">
    <path d="M14.5 110 L20 115.5 L25.5 110" fill="none" stroke="#222" stroke-width="1.8"/>
  </svg>
  <div class="abs" style="left:43px;top:102px;font-size:17.5px;color:#222;line-height:20px;white-space:nowrap">Pancake Stack</div>
  <div class="rowsep" style="top:131px"></div>
  <div class="rowsep" style="top:185px"></div>
  <div class="rowsep" style="top:238.5px"></div>
  <div class="rowsep" style="top:292.5px"></div>
  <div class="bc" style="top:147px">Basic Cut</div>
  <div class="bc" style="top:201px">Basic Cut</div>
  <div class="bc" style="top:255px">Basic Cut</div>
  <div class="bc" style="top:308.5px">Basic Cut</div>

  <svg class="abs" style="left:0;top:0" width="301" height="400">
    <defs>
      <g id="eye">
        <path d="M0.5 5.5 Q8 -2.5 15.5 5.5 Q8 13.5 0.5 5.5 Z" fill="none" stroke="#222" stroke-width="1.5"/>
        <circle cx="8" cy="5.5" r="2.6" fill="none" stroke="#222" stroke-width="1.5"/>
      </g>
    </defs>
    <use href="#eye" x="267" y="104.5"/>
    <use href="#eye" x="267" y="151.5"/>
    <use href="#eye" x="267" y="205.5"/>
    <use href="#eye" x="267" y="259.5"/>
    <use href="#eye" x="267" y="312.5"/>
    <!-- thumbnails -->
    <g transform="translate(35 145.6) scale(0.192) translate(-274 -201.6)">
      <path d="M317.2 206.4Q323 199.5 332 200.4L458 213.6Q467 214.5 470.3 222.9L472.9 229.5Q475.5 236 475 243L474.7 248Q474 258 468 266L433.6 311.7Q430 316.5 424 316.1L301 307.6Q292 307 285.9 300.4L285 299.5Q278 292 276.6 280.1L275.4 269.9Q274 258 281.7 248.8Z" fill="#fbd317"/>
    </g>
    <g transform="translate(35 196) scale(0.0762) translate(-125 -231.8)">
      <path d="M125.1 311.9L125 309.8L125 307.8L125.1 305.9L125.4 304L125.8 302.2L126.3 300.4L127 298.7L127.7 297L128.6 295.4L129.6 293.8L130.6 292.2L131.8 290.7L133 289.2L134.3 287.8L135.7 286.4L137.1 285L138.7 283.7L140.2 282.4L141.8 281.1L143.5 279.9L145.2 278.7L146.9 277.6L148.7 276.4L150.4 275.3L152.2 274.3L154 273.2L155.8 272.2L157.6 271.2L159.4 270.2L161.2 269.3L163.1 268.4L164.9 267.5L166.7 266.6L168.6 265.7L170.4 264.9L172.2 264.1L174.1 263.3L176 262.5L177.8 261.8L179.7 261.1L181.6 260.4L183.4 259.7L185.3 259L187.2 258.4L189.1 257.7L191 257.1L192.9 256.5L194.8 255.9L196.7 255.4L198.6 254.8L200.5 254.3L202.5 253.8L204.4 253.3L206.3 252.8L208.2 252.4L210.2 251.9L212.1 251.5L214.1 251.1L216 250.6L217.9 250.3L219.9 249.9L221.8 249.5L223.8 249.1L225.8 248.8L227.7 248.4L229.7 248.1L231.6 247.8L233.6 247.5L235.6 247.2L237.6 246.9L239.5 246.6L241.5 246.3L243.5 246.1L245.5 245.8L247.5 245.6L249.4 245.3L251.4 245.1L253.4 244.8L255.4 244.6L257.4 244.4L259.4 244.2L261.4 244L263.4 243.8L265.4 243.6L267.4 243.3L269.4 243.1L271.4 242.9L273.4 242.8L275.4 242.6L277.4 242.4L279.4 242.2L281.4 242L283.4 241.8L285.4 241.6L287.4 241.4L289.4 241.2L291.4 241L293.4 240.8L295.4 240.6L297.4 240.4L299.4 240.2L301.4 240L303.4 239.8L305.4 239.7L307.4 239.5L309.4 239.3L311.4 239.1L313.4 238.9L315.4 238.7L317.4 238.5L319.4 238.3L321.4 238.1L323.4 237.9L325.4 237.7L327.4 237.5L329.4 237.4L331.4 237.2L333.4 237L335.4 236.8L337.4 236.6L339.4 236.4L341.4 236.3L343.4 236.1L345.4 235.9L347.4 235.8L349.4 235.6L351.4 235.4L353.4 235.3L355.4 235.1L357.4 234.9L359.4 234.8L361.4 234.6L363.4 234.5L365.4 234.3L367.4 234.2L369.4 234L371.4 233.9L373.4 233.7L375.4 233.6L377.4 233.5L379.4 233.4L381.4 233.2L383.4 233.1L385.4 233L387.4 232.9L389.4 232.8L391.4 232.7L393.4 232.6L395.4 232.5L397.4 232.4L399.4 232.3L401.4 232.2L403.4 232.1L405.4 232L407.4 232L409.4 231.9L411.4 231.8L413.4 231.8L415.4 231.7L417.3 231.7L419.3 231.6L421.3 231.6L423.3 231.6L425.3 231.5L427.3 231.5L429.3 231.5L431.3 231.5L433.3 231.5L435.3 231.5L437.3 231.5L439.3 231.5L441.3 231.5L443.3 231.6L445.3 231.6L447.3 231.6L449.3 231.7L451.2 231.7L453.2 231.8L455.2 231.9L457.2 231.9L459.2 232L461.2 232.1L463.2 232.2L465.2 232.3L467.2 232.4L469.2 232.5L471.1 232.6L473.1 232.8L475.1 232.9L477.1 233L479.1 233.2L481.1 233.4L483.1 233.5L485 233.7L487 233.9L489 234.1L491 234.3L493 234.5L495 234.7L497 234.9L498.9 235.2L500.9 235.4L502.9 235.7L504.9 235.9L506.9 236.2L508.8 236.5L510.8 236.8L512.8 237.1L514.8 237.4L516.8 237.7L518.7 238L520.7 238.3L522.7 238.7L524.7 239L526.6 239.4L528.6 239.8L530.6 240.2L532.6 240.5L534.5 241L536.5 241.4L538.5 241.8L540.4 242.2L542.4 242.6L544.4 243.1L546.3 243.6L548.3 244L550.2 244.5L552.2 245L554.1 245.5L556.1 246L558 246.5L560 247L561.9 247.6L563.9 248.1L565.8 248.7L567.7 249.2L569.7 249.8L571.6 250.4L573.5 251L575.4 251.6L577.3 252.2L579.3 252.8L581.2 253.4L583.1 254.1L585 254.7L586.9 255.4L588.8 256L590.6 256.7L592.5 257.4L594.4 258.1L596.3 258.8L598.2 259.5L600 260.2L601.9 261L603.7 261.7L605.6 262.5L607.4 263.2L609.3 264L611.1 264.8L612.9 265.7L614.6 266.6L616.3 267.5L617.9 268.6L619.5 269.7L621 271L622.4 272.3L623.7 273.8L624.9 275.4L626 277.1L627 278.9L627.9 280.7L628.7 282.6L629.4 284.6L630.1 286.6L630.6 288.6L631 290.7L631.3 292.8L631.5 294.9L631.6 297L631.6 299.1L631.5 301.2L631.2 303.2L630.9 305.2L630.5 307.1L629.9 308.9L629.3 310.7L628.5 312.5L627.6 314.2L626.7 315.8L625.7 317.4L624.6 318.9L623.4 320.4L622.1 321.8L620.8 323.2L619.4 324.6L618 326L616.5 327.3L615 328.6L613.5 329.9L611.9 331.2L610.3 332.4L608.6 333.7L607 335L605.3 336.2L603.6 337.5L602 338.8L600.3 340.1L598.6 341.4L597 342.7L595.4 344L593.8 345.4L592.2 346.8L590.7 348.2L589.3 349.7L587.8 351.2L586.5 352.7L585.2 354.2L584 355.8L582.9 357.4L581.8 359L580.9 360.6L580 362.3L579.2 364.1L578.6 365.8L578.1 367.6L577.7 369.5L577.4 371.3L577.3 373.2L577.2 375.2L577.3 377.1L577.5 379.1L577.7 381.1L578 383.1L578.4 385.1L578.8 387.1L579.3 389.2L579.8 391.2L580.3 393.2L580.9 395.2L581.5 397.1L582.1 399.1L582.7 401.1L583.3 403.1L583.9 405L584.6 407L585.2 408.9L585.9 410.9L586.5 412.8L587.1 414.8L587.7 416.7L588.3 418.6L588.9 420.6L589.5 422.5L590 424.4L590.6 426.4L591 428.3L591.5 430.2L591.9 432.1L592.3 434.1L592.6 436L592.9 437.9L593.2 439.9L593.4 441.8L593.5 443.8L593.6 445.7L593.6 447.7L593.5 449.6L593.4 451.6L593.2 453.5L593 455.5L592.7 457.5L592.3 459.5L591.9 461.4L591.4 463.4L590.9 465.4L590.3 467.3L589.7 469.3L589.1 471.2L588.4 473.2L587.7 475.1L587 477L586.2 478.9L585.5 480.8L584.7 482.7L583.9 484.6L583.1 486.5L582.3 488.3L581.4 490.2L580.6 492L579.7 493.8L578.9 495.6L578 497.4L577.1 499.3L576.3 501.1L575.4 502.9L574.5 504.7L573.7 506.4L572.8 508.2L572 510L571.1 511.8L570.3 513.6L569.5 515.4L568.6 517.2L567.8 519L567.1 520.8L566.3 522.6L565.6 524.4L564.8 526.3L564.1 528.1L563.4 529.9L562.8 531.8L562.2 533.6L561.6 535.5L561 537.4L560.4 539.3L559.9 541.2L559.5 543.1L559 545L558.6 547L558.3 548.9L557.9 550.9L557.7 552.9L557.4 554.9L557.2 557L557.1 559L557 561.1L556.9 563.2L556.8 565.2L556.7 567.3L556.7 569.4L556.7 571.5L556.7 573.6L556.6 575.7L556.6 577.8L556.6 579.9L556.5 582L556.5 584.1L556.4 586.1L556.2 588.2L556.1 590.2L555.9 592.2L555.6 594.2L555.4 596.1L555 598L554.6 599.9L554.1 601.8L553.6 603.6L553 605.4L552.3 607.2L551.5 608.9L550.7 610.5L549.7 612.2L548.6 613.7L547.5 615.3L546.2 616.7L544.8 618.2L543.3 619.5L541.7 620.8L540 622L538.2 623.1L536.4 624.1L534.5 625L532.5 625.7L530.6 626.3L528.6 626.7L526.7 627L524.8 627L522.9 626.8L521.1 626.4L519.3 625.7L517.7 624.8L516.1 623.6L514.7 622.2L513.4 620.6L512.1 618.8L511 617L509.9 615L509 613L508.1 611L507.4 609L506.7 607L506.1 605L505.6 603L505.2 601.1L504.8 599.1L504.5 597.1L504.3 595.2L504.2 593.2L504.1 591.3L504.1 589.3L504.1 587.4L504.2 585.4L504.4 583.5L504.6 581.5L504.8 579.5L505.1 577.6L505.5 575.6L505.8 573.6L506.2 571.6L506.7 569.6L507.1 567.6L507.6 565.6L508.1 563.6L508.6 561.7L509.2 559.7L509.7 557.7L510.2 555.7L510.7 553.7L511.2 551.7L511.7 549.8L512.2 547.8L512.7 545.9L513.2 543.9L513.7 542L514.1 540.1L514.6 538.1L515 536.2L515.4 534.3L515.8 532.4L516.2 530.5L516.5 528.6L516.9 526.6L517.2 524.7L517.5 522.8L517.8 520.9L518.1 519L518.4 517.1L518.6 515.2L518.9 513.2L519.1 511.3L519.2 509.4L519.4 507.5L519.5 505.5L519.6 503.6L519.7 501.6L519.8 499.7L519.8 497.7L519.8 495.7L519.8 493.7L519.8 491.7L519.7 489.7L519.6 487.7L519.5 485.7L519.4 483.6L519.2 481.6L519 479.5L518.7 477.5L518.4 475.4L518.1 473.3L517.8 471.3L517.4 469.2L517 467.2L516.6 465.1L516.1 463.1L515.6 461.1L515.1 459L514.5 457L513.9 455.1L513.3 453.1L512.6 451.1L511.9 449.2L511.1 447.3L510.3 445.4L509.5 443.5L508.6 441.7L507.7 439.9L506.8 438.1L505.8 436.3L504.8 434.6L503.7 432.9L502.6 431.3L501.4 429.7L500.2 428.1L499 426.6L497.7 425.1L496.4 423.7L495 422.3L493.6 420.9L492.1 419.6L490.6 418.4L489 417.2L487.4 416.2L485.8 415.3L484.2 414.8L482.7 414.5L481.1 414.7L479.6 415.3L478.2 416.4L476.9 417.8L475.7 419.5L474.7 421.4L473.9 423.4L473.3 425.4L472.9 427.4L472.7 429.4L472.6 431.4L472.6 433.3L472.8 435.3L473 437.3L473.3 439.4L473.6 441.4L473.9 443.4L474.2 445.4L474.6 447.4L475 449.5L475.4 451.5L475.8 453.5L476.2 455.6L476.6 457.6L477 459.7L477.4 461.7L477.8 463.7L478.1 465.8L478.5 467.8L478.9 469.8L479.2 471.9L479.5 473.9L479.8 475.9L480 478L480.2 480L480.4 482L480.6 484L480.7 486L480.7 488L480.7 489.9L480.7 491.9L480.6 493.9L480.4 495.8L480.2 497.8L479.9 499.7L479.5 501.6L479.1 503.5L478.6 505.4L478.1 507.3L477.4 509.2L476.7 511L475.8 512.9L474.9 514.7L473.9 516.5L472.8 518.3L471.6 520.1L470.3 521.8L469 523.5L467.6 525.1L466.1 526.6L464.6 528.1L463 529.5L461.3 530.8L459.7 531.9L458 533L456.2 533.9L454.5 534.7L452.7 535.4L450.9 535.9L449.2 536.2L447.4 536.3L445.6 536.3L443.9 536L442.2 535.6L440.4 535L438.8 534.3L437.1 533.4L435.5 532.3L433.9 531.2L432.4 529.9L430.9 528.4L429.4 526.9L428 525.3L426.7 523.6L425.4 521.9L424.2 520L423 518.2L421.9 516.3L420.9 514.3L420 512.3L419.1 510.4L418.3 508.4L417.6 506.4L417 504.4L416.5 502.5L416 500.5L415.6 498.6L415.3 496.6L415 494.7L414.8 492.7L414.6 490.8L414.5 488.9L414.5 486.9L414.5 485L414.5 483.1L414.5 481.2L414.6 479.2L414.7 477.3L414.9 475.4L415 473.4L415.2 471.5L415.4 469.6L415.6 467.6L415.8 465.7L416 463.7L416.2 461.7L416.3 459.8L416.5 457.8L416.7 455.8L416.8 453.8L416.9 451.8L417 449.8L417 447.7L417.1 445.7L417 443.6L417 441.6L416.8 439.5L416.7 437.4L416.5 435.3L416.2 433.1L415.8 431L415.4 428.8L415 426.7L414.4 424.5L413.8 422.4L413.1 420.3L412.4 418.2L411.6 416.2L410.7 414.3L409.8 412.4L408.8 410.6L407.7 408.9L406.6 407.4L405.4 405.9L404.2 404.6L402.8 403.4L401.5 402.4L400 401.6L398.5 400.9L396.9 400.4L395.3 400.2L393.5 400.1L391.8 400.2L390 400.5L388.1 401L386.3 401.7L384.4 402.5L382.5 403.4L380.6 404.5L378.8 405.6L377 406.9L375.2 408.2L373.4 409.6L371.8 411L370.2 412.5L368.6 414L367.2 415.5L365.8 417L364.5 418.6L363.2 420.2L362 421.9L360.9 423.5L359.8 425.2L358.8 427L357.8 428.7L356.9 430.5L356 432.2L355.2 434.1L354.5 435.9L353.8 437.7L353.1 439.6L352.5 441.5L351.9 443.4L351.4 445.3L350.9 447.2L350.4 449.1L350 451.1L349.6 453L349.3 455L349 457L348.7 459L348.4 461L348.2 463L348 465L347.8 467L347.6 469L347.5 471.1L347.3 473.1L347.2 475.1L347.1 477.1L347 479.2L347 481.2L346.9 483.2L346.9 485.2L346.8 487.3L346.8 489.3L346.8 491.3L346.7 493.3L346.7 495.3L346.7 497.3L346.7 499.4L346.7 501.4L346.7 503.4L346.6 505.4L346.6 507.4L346.6 509.4L346.6 511.4L346.5 513.4L346.5 515.4L346.4 517.4L346.4 519.4L346.3 521.3L346.2 523.3L346.1 525.3L346 527.3L345.9 529.3L345.7 531.3L345.5 533.2L345.4 535.2L345.1 537.2L344.9 539.1L344.7 541.1L344.4 543L344.1 545L343.8 546.9L343.4 548.9L343 550.8L342.6 552.8L342.2 554.7L341.7 556.7L341.2 558.6L340.6 560.5L340.1 562.4L339.4 564.3L338.8 566.3L338.1 568.2L337.3 570.1L336.6 572L335.7 573.8L334.9 575.7L333.9 577.5L332.9 579.2L331.8 580.9L330.7 582.6L329.5 584.1L328.2 585.6L326.8 587L325.3 588.3L323.7 589.5L322 590.6L320.3 591.6L318.4 592.5L316.4 593.2L314.3 593.7L312.2 594.2L310 594.5L307.8 594.7L305.7 594.7L303.5 594.6L301.5 594.3L299.5 594L297.6 593.5L295.7 592.8L294 592.1L292.3 591.2L290.7 590.2L289.2 589.1L287.8 587.9L286.4 586.6L285.1 585.3L283.9 583.8L282.8 582.3L281.7 580.7L280.7 579L279.7 577.2L278.8 575.5L278 573.6L277.2 571.7L276.5 569.8L275.8 567.8L275.2 565.9L274.6 563.8L274.1 561.8L273.7 559.8L273.3 557.7L272.9 555.7L272.6 553.6L272.3 551.6L272.1 549.6L271.9 547.5L271.7 545.5L271.6 543.5L271.5 541.5L271.4 539.5L271.4 537.5L271.4 535.5L271.4 533.5L271.5 531.5L271.6 529.5L271.7 527.5L271.8 525.6L271.9 523.6L272.1 521.6L272.3 519.6L272.5 517.7L272.7 515.7L272.9 513.7L273.2 511.8L273.4 509.8L273.7 507.8L273.9 505.9L274.2 503.9L274.5 501.9L274.8 500L275 498L275.3 496L275.6 494L275.9 492L276.1 490.1L276.4 488.1L276.6 486.1L276.9 484.1L277.1 482.1L277.3 480.1L277.5 478.1L277.7 476.1L277.8 474.1L278 472L278.1 470L278.2 468L278.3 465.9L278.4 463.9L278.4 461.8L278.4 459.8L278.3 457.7L278.1 455.7L277.9 453.6L277.6 451.6L277.2 449.6L276.7 447.6L276 445.7L275.2 443.8L274.3 441.9L273.2 440.1L271.9 438.3L270.5 436.7L269.1 435.3L267.5 434.2L265.9 433.3L264.2 432.7L262.4 432.4L260.7 432.6L259 433L257.2 433.8L255.5 434.7L253.8 435.9L252.2 437.3L250.7 438.8L249.2 440.4L247.8 442.1L246.6 443.7L245.4 445.5L244.3 447.2L243.3 449L242.4 450.8L241.6 452.6L240.9 454.5L240.2 456.4L239.6 458.3L239.1 460.2L238.6 462.2L238.2 464.2L237.8 466.1L237.5 468.1L237.3 470.1L237 472.2L236.9 474.2L236.7 476.2L236.6 478.3L236.5 480.3L236.4 482.3L236.3 484.4L236.2 486.4L236.2 488.5L236.1 490.5L236.1 492.5L236 494.6L236 496.6L235.9 498.6L235.8 500.5L235.7 502.5L235.6 504.5L235.4 506.4L235.2 508.4L235 510.3L234.8 512.2L234.6 514.1L234.4 516.1L234.1 518L233.8 519.9L233.5 521.8L233.2 523.7L232.8 525.6L232.4 527.5L232 529.4L231.6 531.3L231.1 533.3L230.6 535.2L230.1 537.1L229.6 539.1L229 541L228.4 543L227.8 545L227.2 547L226.5 549L225.8 551L225 553L224.3 555.1L223.5 557.1L222.6 559.1L221.7 561.1L220.8 563L219.8 564.9L218.7 566.7L217.5 568.4L216.3 570.1L215 571.6L213.6 572.9L212.1 574.1L210.6 575.2L208.9 576.1L207.2 576.8L205.4 577.4L203.5 577.8L201.6 578.1L199.7 578.2L197.7 578.2L195.7 578L193.8 577.7L191.9 577.3L189.9 576.7L188.1 576L186.3 575.2L184.5 574.2L182.9 573.2L181.3 572L179.8 570.7L178.4 569.2L177.2 567.7L176 566.1L175 564.4L174 562.6L173.1 560.7L172.3 558.8L171.5 556.9L170.8 554.9L170.2 552.9L169.6 550.8L169.1 548.8L168.5 546.7L168.1 544.7L167.6 542.6L167.2 540.6L166.7 538.5L166.4 536.5L166 534.5L165.7 532.5L165.4 530.4L165.1 528.4L164.8 526.4L164.6 524.4L164.4 522.4L164.2 520.4L164.1 518.4L164 516.5L163.9 514.5L163.8 512.5L163.8 510.5L163.8 508.6L163.8 506.6L163.8 504.6L163.9 502.7L163.9 500.7L164.1 498.8L164.2 496.8L164.4 494.8L164.5 492.9L164.8 491L165 489L165.3 487.1L165.5 485.1L165.8 483.2L166.2 481.3L166.5 479.3L166.9 477.4L167.3 475.5L167.8 473.5L168.2 471.6L168.7 469.7L169.2 467.8L169.7 465.8L170.3 463.9L170.9 462L171.5 460.1L172.1 458.1L172.7 456.2L173.4 454.3L174 452.4L174.7 450.5L175.3 448.5L176 446.6L176.6 444.7L177.3 442.8L177.9 440.8L178.5 438.9L179.1 437L179.7 435.1L180.3 433.1L180.9 431.2L181.4 429.3L181.9 427.4L182.4 425.4L182.8 423.5L183.2 421.6L183.6 419.6L183.9 417.7L184.2 415.8L184.4 413.8L184.5 411.9L184.7 410L184.7 408L184.7 406.1L184.7 404.1L184.6 402.2L184.4 400.2L184.1 398.3L183.8 396.3L183.4 394.4L182.9 392.4L182.4 390.5L181.8 388.5L181.2 386.6L180.5 384.7L179.7 382.8L178.9 380.9L178.1 379L177.1 377.2L176.2 375.3L175.2 373.5L174.1 371.7L173 370L171.8 368.2L170.6 366.5L169.4 364.9L168.2 363.2L166.8 361.6L165.5 360L164.1 358.5L162.7 357L161.3 355.6L159.8 354.2L158.4 352.8L156.9 351.5L155.3 350.3L153.8 349.1L152.2 347.9L150.6 346.7L149.1 345.6L147.5 344.4L146 343.3L144.4 342.2L142.9 341L141.4 339.8L139.9 338.5L138.5 337.3L137.1 335.9L135.7 334.5L134.4 333.1L133.2 331.5L132 329.9L130.8 328.2L129.8 326.3L128.8 324.4L127.9 322.4L127.1 320.3L126.4 318.2L125.8 316.1L125.4 313.9L125.1 311.9Z" fill="#d15e22"/>
    </g>
    <g transform="translate(35 252.7) scale(0.0639) translate(-72.6 -308)">
      <clipPath id="lclip"><path d="M50 285 Q380 430 700 285 V720 H50 Z"/></clipPath>
      <path d="M90.5 375.5L89.7 373.7L89 371.9L88.4 370.1L87.9 368.2L87.5 366.3L87.1 364.4L86.9 362.4L86.7 360.5L86.5 358.5L86.5 356.5L86.5 354.5L86.6 352.5L86.8 350.5L87 348.5L87.3 346.5L87.6 344.5L88 342.5L88.5 340.5L89 338.5L89.6 336.5L90.3 334.5L91 332.5L91.7 330.6L92.6 328.6L93.4 326.7L94.3 324.8L95.3 323L96.3 321.1L97.3 319.3L98.4 317.6L99.5 315.8L100.7 314.1L101.8 312.4L103.1 310.8L104.3 309.2L105.6 307.7L107 306.2L108.3 304.7L109.7 303.3L111.1 301.9L112.6 300.6L114 299.4L115.5 298.1L117 296.9L118.6 295.8L120.2 294.7L121.8 293.6L123.4 292.6L125 291.6L126.7 290.7L128.4 289.7L130.1 288.9L131.8 288L133.5 287.2L135.3 286.4L137.1 285.6L138.9 284.9L140.7 284.2L142.5 283.5L144.4 282.9L146.2 282.3L148.1 281.7L150 281.1L151.9 280.5L153.8 280L155.8 279.5L157.7 279L159.7 278.5L161.6 278.1L163.6 277.7L165.6 277.2L167.6 276.8L169.6 276.4L171.6 276.1L173.6 275.7L175.6 275.4L177.6 275L179.7 274.7L181.7 274.4L183.7 274L185.8 273.7L187.8 273.4L189.9 273.1L191.9 272.8L193.9 272.5L196 272.2L198 271.9L200.1 271.7L202.1 271.4L204.2 271.1L206.2 270.8L208.2 270.5L210.3 270.2L212.3 269.9L214.3 269.6L216.4 269.3L218.4 269L220.4 268.7L222.5 268.4L224.5 268.1L226.5 267.8L228.5 267.5L230.5 267.2L232.6 266.9L234.6 266.6L236.6 266.3L238.6 266L240.6 265.7L242.6 265.4L244.6 265.1L246.6 264.9L248.6 264.6L250.7 264.3L252.7 264L254.7 263.7L256.7 263.4L258.7 263.1L260.7 262.8L262.7 262.6L264.6 262.3L266.6 262L268.6 261.7L270.6 261.4L272.6 261.2L274.6 260.9L276.6 260.6L278.6 260.4L280.6 260.1L282.6 259.8L284.5 259.6L286.5 259.3L288.5 259.1L290.5 258.8L292.5 258.6L294.5 258.3L296.4 258.1L298.4 257.9L300.4 257.6L302.4 257.4L304.4 257.2L306.3 257L308.3 256.7L310.3 256.5L312.3 256.3L314.2 256.1L316.2 255.9L318.2 255.7L320.2 255.5L322.1 255.3L324.1 255.1L326.1 254.9L328 254.8L330 254.6L332 254.4L333.9 254.3L335.9 254.1L337.9 253.9L339.9 253.8L341.8 253.6L343.8 253.5L345.8 253.4L347.7 253.3L349.7 253.1L351.7 253L353.6 252.9L355.6 252.8L357.6 252.7L359.5 252.6L361.5 252.5L363.5 252.4L365.4 252.4L367.4 252.3L369.4 252.2L371.3 252.2L373.3 252.1L375.3 252.1L377.2 252.1L379.2 252L381.2 252L383.1 252L385.1 252L387.1 252L389 252L391 252L393 252L394.9 252.1L396.9 252.1L398.9 252.1L400.9 252.2L402.8 252.2L404.8 252.3L406.8 252.4L408.7 252.4L410.7 252.5L412.7 252.6L414.7 252.7L416.6 252.8L418.6 252.8L420.6 252.9L422.6 253.1L424.5 253.2L426.5 253.3L428.5 253.4L430.5 253.5L432.4 253.6L434.4 253.8L436.4 253.9L438.4 254.1L440.4 254.2L442.3 254.3L444.3 254.5L446.3 254.7L448.3 254.8L450.3 255L452.3 255.1L454.2 255.3L456.2 255.5L458.2 255.7L460.2 255.8L462.2 256L464.2 256.2L466.2 256.4L468.1 256.6L470.1 256.8L472.1 257L474.1 257.2L476.1 257.4L478.1 257.6L480.1 257.8L482.1 258L484.1 258.2L486.1 258.4L488.1 258.6L490.1 258.8L492.1 259L494.1 259.2L496.1 259.4L498.1 259.6L500.1 259.9L502.1 260.1L504.1 260.3L506.1 260.5L508.1 260.7L510.1 260.9L512.2 261.2L514.2 261.4L516.2 261.6L518.2 261.8L520.2 262L522.2 262.3L524.2 262.5L526.3 262.7L528.3 262.9L530.3 263.1L532.3 263.3L534.4 263.6L536.4 263.8L538.4 264L540.4 264.2L542.5 264.4L544.5 264.6L546.5 264.8L548.6 265L550.6 265.2L552.6 265.4L554.7 265.6L556.7 265.8L558.7 266L560.8 266.2L562.8 266.4L564.9 266.6L566.9 266.8L569 267L571 267.2L573 267.4L575.1 267.6L577.1 267.8L579.1 268L581.2 268.3L583.2 268.5L585.2 268.8L587.2 269.1L589.2 269.4L591.2 269.7L593.2 270L595.2 270.4L597.1 270.7L599.1 271.1L601 271.6L603 272L604.9 272.5L606.8 273L608.7 273.6L610.6 274.1L612.4 274.7L614.3 275.4L616.1 276.1L618 276.8L619.8 277.5L621.6 278.3L623.3 279.2L625.1 280.1L626.8 281L628.5 282L630.2 283L631.9 284L633.5 285.1L635.1 286.3L636.7 287.5L638.3 288.7L639.8 290L641.3 291.3L642.8 292.7L644.2 294.1L645.5 295.5L646.9 297L648.2 298.5L649.5 300.1L650.7 301.7L651.9 303.3L653 305L654.1 306.6L655.2 308.4L656.2 310.1L657.2 311.9L658.1 313.7L659 315.5L659.9 317.3L660.6 319.2L661.4 321.1L662.1 323L662.8 324.9L663.4 326.8L663.9 328.8L664.4 330.7L664.9 332.7L665.3 334.7L665.7 336.7L666 338.7L666.2 340.7L666.5 342.7L666.6 344.7L666.7 346.7L666.8 348.7L666.8 350.8L666.8 352.8L666.7 354.8L666.5 356.8L666.3 358.8L666.1 360.8L665.8 362.8L665.4 364.8L665 366.7L664.6 368.7L664.1 370.6L663.5 372.5L662.8 374.3L662.1 376.1L661.2 377.9L660.3 379.6L659.3 381.2L658.2 382.8L657 384.2L655.7 385.6L654.3 387L652.9 388.3L651.4 389.5L649.8 390.8L648.3 392L646.7 393.3L645.2 394.5L643.6 395.8L642.1 397.2L640.7 398.5L639.3 400L640.2 401.9L641.1 403.7L641.9 405.6L642.7 407.5L643.4 409.5L644.1 411.4L644.7 413.4L645.3 415.4L645.8 417.3L646.3 419.3L646.7 421.3L647 423.4L647.3 425.4L647.5 427.4L647.7 429.4L647.8 431.5L647.9 433.5L647.9 435.6L647.8 437.6L647.7 439.6L647.5 441.7L647.3 443.7L647 445.7L646.6 447.7L646.2 449.8L645.7 451.8L645.2 453.8L644.6 455.8L643.9 457.7L643.2 459.7L644.8 461L646.4 462.3L647.9 463.7L649.4 465.2L650.8 466.7L652.2 468.2L653.6 469.8L654.8 471.4L656.1 473.1L657.2 474.8L658.3 476.5L659.4 478.2L660.4 480L661.3 481.8L662.2 483.7L663 485.5L663.8 487.4L664.5 489.3L665.1 491.2L665.6 493.2L666.1 495.1L666.5 497.1L666.9 499.1L667.1 501L667.3 503L667.5 505L667.5 507L667.5 509L667.4 510.9L667.2 512.9L666.9 514.9L666.6 516.8L666.2 518.8L665.7 520.7L665.1 522.6L664.5 524.6L663.9 526.5L663.1 528.4L662.4 530.2L661.5 532.1L660.7 534L659.7 535.8L658.8 537.6L657.8 539.4L656.7 541.2L655.7 543L654.6 544.7L653.4 546.5L652.3 548.2L651.1 549.9L649.9 551.5L648.7 553.2L647.5 554.8L646.2 556.4L645 557.9L643.7 559.5L642.5 561L643.2 562.6L643.8 564.3L644.5 566L645.3 567.8L646 569.7L646.7 571.6L647.4 573.6L648.2 575.6L648.8 577.6L649.5 579.7L650.1 581.7L650.7 583.8L651.2 585.9L651.6 588L652 590.2L652.3 592.2L652.6 594.3L652.7 596.4L652.7 598.4L652.7 600.4L652.5 602.4L652.2 604.3L651.8 606.2L651.3 608L650.8 609.8L650.1 611.6L649.4 613.4L648.5 615.1L647.6 616.7L646.6 618.4L645.6 620L644.5 621.6L643.3 623.1L642 624.6L640.7 626.1L639.4 627.5L638 629L636.5 630.3L635 631.7L633.5 633L631.9 634.3L630.3 635.5L628.7 636.8L627.1 638L625.4 639.1L623.7 640.2L622 641.3L620.3 642.4L618.6 643.5L616.9 644.5L615.2 645.5L613.4 646.4L611.7 647.4L609.9 648.3L608.1 649.2L606.3 650L604.5 650.9L602.7 651.7L600.9 652.5L599 653.2L597.2 654L595.3 654.7L593.5 655.4L591.6 656.1L589.7 656.8L587.9 657.4L586 658L584.1 658.6L582.2 659.2L580.3 659.8L578.3 660.4L576.4 660.9L574.5 661.4L572.6 662L570.6 662.5L568.7 662.9L566.7 663.4L564.8 663.9L562.8 664.3L560.9 664.8L558.9 665.2L556.9 665.6L554.9 666L553 666.4L551 666.8L549 667.2L547 667.5L545.1 667.9L543.1 668.3L541.1 668.6L539.1 669L537.1 669.3L535.1 669.7L533.2 670L531.2 670.3L529.2 670.6L527.2 671L525.2 671.3L523.2 671.6L521.2 671.9L519.3 672.2L517.3 672.5L515.3 672.8L513.3 673.1L511.3 673.3L509.3 673.6L507.3 673.9L505.3 674.2L503.3 674.4L501.3 674.7L499.3 674.9L497.4 675.2L495.4 675.4L493.4 675.6L491.4 675.9L489.4 676.1L487.4 676.3L485.4 676.5L483.4 676.8L481.4 677L479.4 677.2L477.4 677.4L475.4 677.6L473.4 677.7L471.4 677.9L469.4 678.1L467.4 678.3L465.4 678.5L463.4 678.6L461.4 678.8L459.4 678.9L457.4 679.1L455.4 679.2L453.4 679.4L451.4 679.5L449.4 679.6L447.4 679.8L445.4 679.9L443.4 680L441.4 680.1L439.5 680.2L437.5 680.3L435.5 680.4L433.5 680.5L431.5 680.6L429.5 680.7L427.5 680.8L425.5 680.9L423.5 680.9L421.5 681L419.5 681.1L417.5 681.1L415.5 681.2L413.5 681.2L411.5 681.3L409.5 681.3L407.5 681.3L405.5 681.4L403.5 681.4L401.5 681.4L399.5 681.4L397.5 681.4L395.5 681.5L393.5 681.5L391.5 681.5L389.5 681.4L387.5 681.4L385.5 681.4L383.5 681.4L381.5 681.4L379.5 681.4L377.5 681.3L375.5 681.3L373.5 681.2L371.5 681.2L369.5 681.1L367.5 681.1L365.5 681L363.5 681L361.6 680.9L359.6 680.8L357.6 680.7L355.6 680.7L353.6 680.6L351.6 680.5L349.6 680.4L347.6 680.3L345.6 680.2L343.6 680.1L341.6 680L339.6 679.8L337.7 679.7L335.7 679.6L333.7 679.5L331.7 679.3L329.7 679.2L327.7 679L325.7 678.9L323.7 678.7L321.8 678.6L319.8 678.4L317.8 678.3L315.8 678.1L313.8 677.9L311.8 677.7L309.9 677.6L307.9 677.4L305.9 677.2L303.9 677L301.9 676.8L300 676.6L298 676.4L296 676.2L294 675.9L292 675.7L290 675.5L288.1 675.3L286.1 675L284.1 674.8L282.1 674.6L280.1 674.3L278.2 674.1L276.2 673.8L274.2 673.6L272.2 673.3L270.3 673.1L268.3 672.8L266.3 672.5L264.3 672.2L262.3 672L260.4 671.7L258.4 671.4L256.4 671.1L254.4 670.8L252.5 670.5L250.5 670.2L248.5 669.9L246.5 669.6L244.5 669.3L242.6 669L240.6 668.7L238.6 668.4L236.6 668L234.6 667.7L232.7 667.4L230.7 667L228.7 666.7L226.7 666.4L224.7 666L222.8 665.7L220.8 665.3L218.8 665L216.8 664.6L214.8 664.2L212.9 663.9L210.9 663.5L208.9 663.1L206.9 662.8L204.9 662.4L203 662L201 661.6L199 661.2L197 660.8L195 660.4L193 660.1L191.1 659.7L189.1 659.2L187.1 658.8L185.1 658.4L183.1 658L181.1 657.6L179.2 657.2L177.2 656.7L175.2 656.3L173.2 655.9L171.2 655.4L169.3 654.9L167.3 654.5L165.3 654L163.4 653.5L161.4 653L159.5 652.5L157.5 652L155.6 651.4L153.7 650.8L151.7 650.3L149.8 649.7L147.9 649.1L146 648.5L144.1 647.8L142.2 647.2L140.4 646.5L138.5 645.8L136.7 645.1L134.8 644.3L133 643.5L131.2 642.8L129.4 642L127.6 641.1L125.8 640.3L124 639.4L122.3 638.5L120.6 637.5L118.8 636.6L117.1 635.6L115.4 634.5L113.8 633.5L112.1 632.4L110.5 631.3L108.8 630.1L107.2 629L105.6 627.8L104.1 626.5L102.5 625.2L101 623.9L99.5 622.6L98 621.2L96.6 619.8L95.1 618.3L93.7 616.8L92.4 615.3L91.1 613.8L89.8 612.2L88.6 610.6L87.4 609L86.3 607.4L85.2 605.7L84.2 604L83.2 602.3L82.4 600.5L81.5 598.8L80.8 597L80.1 595.2L79.5 593.3L78.9 591.5L78.5 589.6L78.1 587.7L77.8 585.8L77.6 583.9L77.5 582L77.4 580.1L77.5 578.1L77.7 576.1L78 574.2L78.3 572.2L78.8 570.2L79.4 568.2L80 566.2L80.7 564.2L81.5 562.2L82.4 560.2L83.3 558.2L84.2 556.3L85.2 554.4L86.2 552.4L87.3 550.6L88.3 548.7L89.4 546.9L90.5 545.1L91.6 543.4L92.7 541.7L93.7 540.1L94.8 538.5L95.8 536.9L96.8 535.4L97.7 534L96.2 532.6L94.7 531.1L93.4 529.6L92.1 528L91 526.4L89.9 524.7L88.9 523L87.9 521.2L87.1 519.4L86.3 517.6L85.6 515.7L85 513.8L84.5 511.9L84.1 509.9L83.7 508L83.4 506L83.2 504L83 502L83 499.9L83 497.9L83 495.9L83.2 493.9L83.4 491.8L83.6 489.8L84 487.8L84.4 485.8L84.9 483.8L85.4 481.9L86 479.9L86.6 478L87.4 476.1L88.1 474.2L89 472.4L89.9 470.6L90.8 468.9L91.8 467.2L92.9 465.5L91.2 464.2L89.6 462.8L88 461.4L86.6 459.9L85.2 458.4L83.9 456.8L82.7 455.3L81.5 453.6L80.5 452L79.5 450.3L78.6 448.5L77.7 446.8L76.9 445L76.2 443.1L75.6 441.3L75 439.4L74.5 437.5L74.1 435.6L73.7 433.7L73.5 431.8L73.2 429.8L73.1 427.8L72.9 425.9L72.9 423.9L72.9 421.9L73 419.9L73.1 417.9L73.3 415.9L73.6 413.9L73.9 411.9L74.3 409.9L74.7 407.9L75.1 405.9L75.7 404L76.3 402L76.9 400.1L77.6 398.2L78.3 396.3L79.1 394.4L79.9 392.5L80.8 390.7L81.7 388.9L82.6 387.1L83.6 385.3L84.7 383.6L85.8 381.9L86.9 380.2L88.1 378.6L89.3 377L90.5 375.5Z" fill="#f7d194" clip-path="url(#lclip)"/>
      <g fill="none" stroke="#fde7c8" stroke-width="14">
        <path d="M110 410 Q380 450 640 405"/><path d="M110 495 Q380 530 640 475"/><path d="M110 560 Q380 615 635 570"/>
      </g>
    </g>
    <g transform="translate(35 304.3) scale(0.064) translate(-72.6 -238)">
      <path d="M90.5 375.5L89.7 373.7L89 371.9L88.4 370.1L87.9 368.2L87.5 366.3L87.1 364.4L86.9 362.4L86.7 360.5L86.5 358.5L86.5 356.5L86.5 354.5L86.6 352.5L86.8 350.5L87 348.5L87.3 346.5L87.6 344.5L88 342.5L88.5 340.5L89 338.5L89.6 336.5L90.3 334.5L91 332.5L91.7 330.6L92.6 328.6L93.4 326.7L94.3 324.8L95.3 323L96.3 321.1L97.3 319.3L98.4 317.6L99.5 315.8L100.7 314.1L101.8 312.4L103.1 310.8L104.3 309.2L105.6 307.7L107 306.2L108.3 304.7L109.7 303.3L111.1 301.9L112.6 300.6L114 299.4L115.5 298.1L117 296.9L118.6 295.8L120.2 294.7L121.8 293.6L123.4 292.6L125 291.6L126.7 290.7L128.4 289.7L130.1 288.9L131.8 288L133.5 287.2L135.3 286.4L137.1 285.6L138.9 284.9L140.7 284.2L142.5 283.5L144.4 282.9L146.2 282.3L148.1 281.7L150 281.1L151.9 280.5L153.8 280L155.8 279.5L157.7 279L159.7 278.5L161.6 278.1L163.6 277.7L165.6 277.2L167.6 276.8L169.6 276.4L171.6 276.1L173.6 275.7L175.6 275.4L177.6 275L179.7 274.7L181.7 274.4L183.7 274L185.8 273.7L187.8 273.4L189.9 273.1L191.9 272.8L193.9 272.5L196 272.2L198 271.9L200.1 271.7L202.1 271.4L204.2 271.1L206.2 270.8L208.2 270.5L210.3 270.2L212.3 269.9L214.3 269.6L216.4 269.3L218.4 269L220.4 268.7L222.5 268.4L224.5 268.1L226.5 267.8L228.5 267.5L230.5 267.2L232.6 266.9L234.6 266.6L236.6 266.3L238.6 266L240.6 265.7L242.6 265.4L244.6 265.1L246.6 264.9L248.6 264.6L250.7 264.3L252.7 264L254.7 263.7L256.7 263.4L258.7 263.1L260.7 262.8L262.7 262.6L264.6 262.3L266.6 262L268.6 261.7L270.6 261.4L272.6 261.2L274.6 260.9L276.6 260.6L278.6 260.4L280.6 260.1L282.6 259.8L284.5 259.6L286.5 259.3L288.5 259.1L290.5 258.8L292.5 258.6L294.5 258.3L296.4 258.1L298.4 257.9L300.4 257.6L302.4 257.4L304.4 257.2L306.3 257L308.3 256.7L310.3 256.5L312.3 256.3L314.2 256.1L316.2 255.9L318.2 255.7L320.2 255.5L322.1 255.3L324.1 255.1L326.1 254.9L328 254.8L330 254.6L332 254.4L333.9 254.3L335.9 254.1L337.9 253.9L339.9 253.8L341.8 253.6L343.8 253.5L345.8 253.4L347.7 253.3L349.7 253.1L351.7 253L353.6 252.9L355.6 252.8L357.6 252.7L359.5 252.6L361.5 252.5L363.5 252.4L365.4 252.4L367.4 252.3L369.4 252.2L371.3 252.2L373.3 252.1L375.3 252.1L377.2 252.1L379.2 252L381.2 252L383.1 252L385.1 252L387.1 252L389 252L391 252L393 252L394.9 252.1L396.9 252.1L398.9 252.1L400.9 252.2L402.8 252.2L404.8 252.3L406.8 252.4L408.7 252.4L410.7 252.5L412.7 252.6L414.7 252.7L416.6 252.8L418.6 252.8L420.6 252.9L422.6 253.1L424.5 253.2L426.5 253.3L428.5 253.4L430.5 253.5L432.4 253.6L434.4 253.8L436.4 253.9L438.4 254.1L440.4 254.2L442.3 254.3L444.3 254.5L446.3 254.7L448.3 254.8L450.3 255L452.3 255.1L454.2 255.3L456.2 255.5L458.2 255.7L460.2 255.8L462.2 256L464.2 256.2L466.2 256.4L468.1 256.6L470.1 256.8L472.1 257L474.1 257.2L476.1 257.4L478.1 257.6L480.1 257.8L482.1 258L484.1 258.2L486.1 258.4L488.1 258.6L490.1 258.8L492.1 259L494.1 259.2L496.1 259.4L498.1 259.6L500.1 259.9L502.1 260.1L504.1 260.3L506.1 260.5L508.1 260.7L510.1 260.9L512.2 261.2L514.2 261.4L516.2 261.6L518.2 261.8L520.2 262L522.2 262.3L524.2 262.5L526.3 262.7L528.3 262.9L530.3 263.1L532.3 263.3L534.4 263.6L536.4 263.8L538.4 264L540.4 264.2L542.5 264.4L544.5 264.6L546.5 264.8L548.6 265L550.6 265.2L552.6 265.4L554.7 265.6L556.7 265.8L558.7 266L560.8 266.2L562.8 266.4L564.9 266.6L566.9 266.8L569 267L571 267.2L573 267.4L575.1 267.6L577.1 267.8L579.1 268L581.2 268.3L583.2 268.5L585.2 268.8L587.2 269.1L589.2 269.4L591.2 269.7L593.2 270L595.2 270.4L597.1 270.7L599.1 271.1L601 271.6L603 272L604.9 272.5L606.8 273L608.7 273.6L610.6 274.1L612.4 274.7L614.3 275.4L616.1 276.1L618 276.8L619.8 277.5L621.6 278.3L623.3 279.2L625.1 280.1L626.8 281L628.5 282L630.2 283L631.9 284L633.5 285.1L635.1 286.3L636.7 287.5L638.3 288.7L639.8 290L641.3 291.3L642.8 292.7L644.2 294.1L645.5 295.5L646.9 297L648.2 298.5L649.5 300.1L650.7 301.7L651.9 303.3L653 305L654.1 306.6L655.2 308.4L656.2 310.1L657.2 311.9L658.1 313.7L659 315.5L659.9 317.3L660.6 319.2L661.4 321.1L662.1 323L662.8 324.9L663.4 326.8L663.9 328.8L664.4 330.7L664.9 332.7L665.3 334.7L665.7 336.7L666 338.7L666.2 340.7L666.5 342.7L666.6 344.7L666.7 346.7L666.8 348.7L666.8 350.8L666.8 352.8L666.7 354.8L666.5 356.8L666.3 358.8L666.1 360.8L665.8 362.8L665.4 364.8L665 366.7L664.6 368.7L664.1 370.6L663.5 372.5L662.8 374.3L662.1 376.1L661.2 377.9L660.3 379.6L659.3 381.2L658.2 382.8L657 384.2L655.7 385.6L654.3 387L652.9 388.3L651.4 389.5L649.8 390.8L648.3 392L646.7 393.3L645.2 394.5L643.6 395.8L642.1 397.2L640.7 398.5L639.3 400L640.2 401.9L641.1 403.7L641.9 405.6L642.7 407.5L643.4 409.5L644.1 411.4L644.7 413.4L645.3 415.4L645.8 417.3L646.3 419.3L646.7 421.3L647 423.4L647.3 425.4L647.5 427.4L647.7 429.4L647.8 431.5L647.9 433.5L647.9 435.6L647.8 437.6L647.7 439.6L647.5 441.7L647.3 443.7L647 445.7L646.6 447.7L646.2 449.8L645.7 451.8L645.2 453.8L644.6 455.8L643.9 457.7L643.2 459.7L644.8 461L646.4 462.3L647.9 463.7L649.4 465.2L650.8 466.7L652.2 468.2L653.6 469.8L654.8 471.4L656.1 473.1L657.2 474.8L658.3 476.5L659.4 478.2L660.4 480L661.3 481.8L662.2 483.7L663 485.5L663.8 487.4L664.5 489.3L665.1 491.2L665.6 493.2L666.1 495.1L666.5 497.1L666.9 499.1L667.1 501L667.3 503L667.5 505L667.5 507L667.5 509L667.4 510.9L667.2 512.9L666.9 514.9L666.6 516.8L666.2 518.8L665.7 520.7L665.1 522.6L664.5 524.6L663.9 526.5L663.1 528.4L662.4 530.2L661.5 532.1L660.7 534L659.7 535.8L658.8 537.6L657.8 539.4L656.7 541.2L655.7 543L654.6 544.7L653.4 546.5L652.3 548.2L651.1 549.9L649.9 551.5L648.7 553.2L647.5 554.8L646.2 556.4L645 557.9L643.7 559.5L642.5 561L643.2 562.6L643.8 564.3L644.5 566L645.3 567.8L646 569.7L646.7 571.6L647.4 573.6L648.2 575.6L648.8 577.6L649.5 579.7L650.1 581.7L650.7 583.8L651.2 585.9L651.6 588L652 590.2L652.3 592.2L652.6 594.3L652.7 596.4L652.7 598.4L652.7 600.4L652.5 602.4L652.2 604.3L651.8 606.2L651.3 608L650.8 609.8L650.1 611.6L649.4 613.4L648.5 615.1L647.6 616.7L646.6 618.4L645.6 620L644.5 621.6L643.3 623.1L642 624.6L640.7 626.1L639.4 627.5L638 629L636.5 630.3L635 631.7L633.5 633L631.9 634.3L630.3 635.5L628.7 636.8L627.1 638L625.4 639.1L623.7 640.2L622 641.3L620.3 642.4L618.6 643.5L616.9 644.5L615.2 645.5L613.4 646.4L611.7 647.4L609.9 648.3L608.1 649.2L606.3 650L604.5 650.9L602.7 651.7L600.9 652.5L599 653.2L597.2 654L595.3 654.7L593.5 655.4L591.6 656.1L589.7 656.8L587.9 657.4L586 658L584.1 658.6L582.2 659.2L580.3 659.8L578.3 660.4L576.4 660.9L574.5 661.4L572.6 662L570.6 662.5L568.7 662.9L566.7 663.4L564.8 663.9L562.8 664.3L560.9 664.8L558.9 665.2L556.9 665.6L554.9 666L553 666.4L551 666.8L549 667.2L547 667.5L545.1 667.9L543.1 668.3L541.1 668.6L539.1 669L537.1 669.3L535.1 669.7L533.2 670L531.2 670.3L529.2 670.6L527.2 671L525.2 671.3L523.2 671.6L521.2 671.9L519.3 672.2L517.3 672.5L515.3 672.8L513.3 673.1L511.3 673.3L509.3 673.6L507.3 673.9L505.3 674.2L503.3 674.4L501.3 674.7L499.3 674.9L497.4 675.2L495.4 675.4L493.4 675.6L491.4 675.9L489.4 676.1L487.4 676.3L485.4 676.5L483.4 676.8L481.4 677L479.4 677.2L477.4 677.4L475.4 677.6L473.4 677.7L471.4 677.9L469.4 678.1L467.4 678.3L465.4 678.5L463.4 678.6L461.4 678.8L459.4 678.9L457.4 679.1L455.4 679.2L453.4 679.4L451.4 679.5L449.4 679.6L447.4 679.8L445.4 679.9L443.4 680L441.4 680.1L439.5 680.2L437.5 680.3L435.5 680.4L433.5 680.5L431.5 680.6L429.5 680.7L427.5 680.8L425.5 680.9L423.5 680.9L421.5 681L419.5 681.1L417.5 681.1L415.5 681.2L413.5 681.2L411.5 681.3L409.5 681.3L407.5 681.3L405.5 681.4L403.5 681.4L401.5 681.4L399.5 681.4L397.5 681.4L395.5 681.5L393.5 681.5L391.5 681.5L389.5 681.4L387.5 681.4L385.5 681.4L383.5 681.4L381.5 681.4L379.5 681.4L377.5 681.3L375.5 681.3L373.5 681.2L371.5 681.2L369.5 681.1L367.5 681.1L365.5 681L363.5 681L361.6 680.9L359.6 680.8L357.6 680.7L355.6 680.7L353.6 680.6L351.6 680.5L349.6 680.4L347.6 680.3L345.6 680.2L343.6 680.1L341.6 680L339.6 679.8L337.7 679.7L335.7 679.6L333.7 679.5L331.7 679.3L329.7 679.2L327.7 679L325.7 678.9L323.7 678.7L321.8 678.6L319.8 678.4L317.8 678.3L315.8 678.1L313.8 677.9L311.8 677.7L309.9 677.6L307.9 677.4L305.9 677.2L303.9 677L301.9 676.8L300 676.6L298 676.4L296 676.2L294 675.9L292 675.7L290 675.5L288.1 675.3L286.1 675L284.1 674.8L282.1 674.6L280.1 674.3L278.2 674.1L276.2 673.8L274.2 673.6L272.2 673.3L270.3 673.1L268.3 672.8L266.3 672.5L264.3 672.2L262.3 672L260.4 671.7L258.4 671.4L256.4 671.1L254.4 670.8L252.5 670.5L250.5 670.2L248.5 669.9L246.5 669.6L244.5 669.3L242.6 669L240.6 668.7L238.6 668.4L236.6 668L234.6 667.7L232.7 667.4L230.7 667L228.7 666.7L226.7 666.4L224.7 666L222.8 665.7L220.8 665.3L218.8 665L216.8 664.6L214.8 664.2L212.9 663.9L210.9 663.5L208.9 663.1L206.9 662.8L204.9 662.4L203 662L201 661.6L199 661.2L197 660.8L195 660.4L193 660.1L191.1 659.7L189.1 659.2L187.1 658.8L185.1 658.4L183.1 658L181.1 657.6L179.2 657.2L177.2 656.7L175.2 656.3L173.2 655.9L171.2 655.4L169.3 654.9L167.3 654.5L165.3 654L163.4 653.5L161.4 653L159.5 652.5L157.5 652L155.6 651.4L153.7 650.8L151.7 650.3L149.8 649.7L147.9 649.1L146 648.5L144.1 647.8L142.2 647.2L140.4 646.5L138.5 645.8L136.7 645.1L134.8 644.3L133 643.5L131.2 642.8L129.4 642L127.6 641.1L125.8 640.3L124 639.4L122.3 638.5L120.6 637.5L118.8 636.6L117.1 635.6L115.4 634.5L113.8 633.5L112.1 632.4L110.5 631.3L108.8 630.1L107.2 629L105.6 627.8L104.1 626.5L102.5 625.2L101 623.9L99.5 622.6L98 621.2L96.6 619.8L95.1 618.3L93.7 616.8L92.4 615.3L91.1 613.8L89.8 612.2L88.6 610.6L87.4 609L86.3 607.4L85.2 605.7L84.2 604L83.2 602.3L82.4 600.5L81.5 598.8L80.8 597L80.1 595.2L79.5 593.3L78.9 591.5L78.5 589.6L78.1 587.7L77.8 585.8L77.6 583.9L77.5 582L77.4 580.1L77.5 578.1L77.7 576.1L78 574.2L78.3 572.2L78.8 570.2L79.4 568.2L80 566.2L80.7 564.2L81.5 562.2L82.4 560.2L83.3 558.2L84.2 556.3L85.2 554.4L86.2 552.4L87.3 550.6L88.3 548.7L89.4 546.9L90.5 545.1L91.6 543.4L92.7 541.7L93.7 540.1L94.8 538.5L95.8 536.9L96.8 535.4L97.7 534L96.2 532.6L94.7 531.1L93.4 529.6L92.1 528L91 526.4L89.9 524.7L88.9 523L87.9 521.2L87.1 519.4L86.3 517.6L85.6 515.7L85 513.8L84.5 511.9L84.1 509.9L83.7 508L83.4 506L83.2 504L83 502L83 499.9L83 497.9L83 495.9L83.2 493.9L83.4 491.8L83.6 489.8L84 487.8L84.4 485.8L84.9 483.8L85.4 481.9L86 479.9L86.6 478L87.4 476.1L88.1 474.2L89 472.4L89.9 470.6L90.8 468.9L91.8 467.2L92.9 465.5L91.2 464.2L89.6 462.8L88 461.4L86.6 459.9L85.2 458.4L83.9 456.8L82.7 455.3L81.5 453.6L80.5 452L79.5 450.3L78.6 448.5L77.7 446.8L76.9 445L76.2 443.1L75.6 441.3L75 439.4L74.5 437.5L74.1 435.6L73.7 433.7L73.5 431.8L73.2 429.8L73.1 427.8L72.9 425.9L72.9 423.9L72.9 421.9L73 419.9L73.1 417.9L73.3 415.9L73.6 413.9L73.9 411.9L74.3 409.9L74.7 407.9L75.1 405.9L75.7 404L76.3 402L76.9 400.1L77.6 398.2L78.3 396.3L79.1 394.4L79.9 392.5L80.8 390.7L81.7 388.9L82.6 387.1L83.6 385.3L84.7 383.6L85.8 381.9L86.9 380.2L88.1 378.6L89.3 377L90.5 375.5Z" fill="#f29b30"/>
    </g>
  </svg>

  <div class="abs" style="left:0;top:711px;width:301px;height:1px;background:#dedede"></div>
  <div class="abs" style="left:13px;top:719.5px;width:64px;height:40px;background:#fff;border:1px solid #8f8f8f;border-radius:2px"></div>
  <div class="abs" style="left:91.5px;top:735px;font-size:12.6px;color:#222;line-height:15px;white-space:nowrap">Blank Canvas</div>
</div>

</body></html>
